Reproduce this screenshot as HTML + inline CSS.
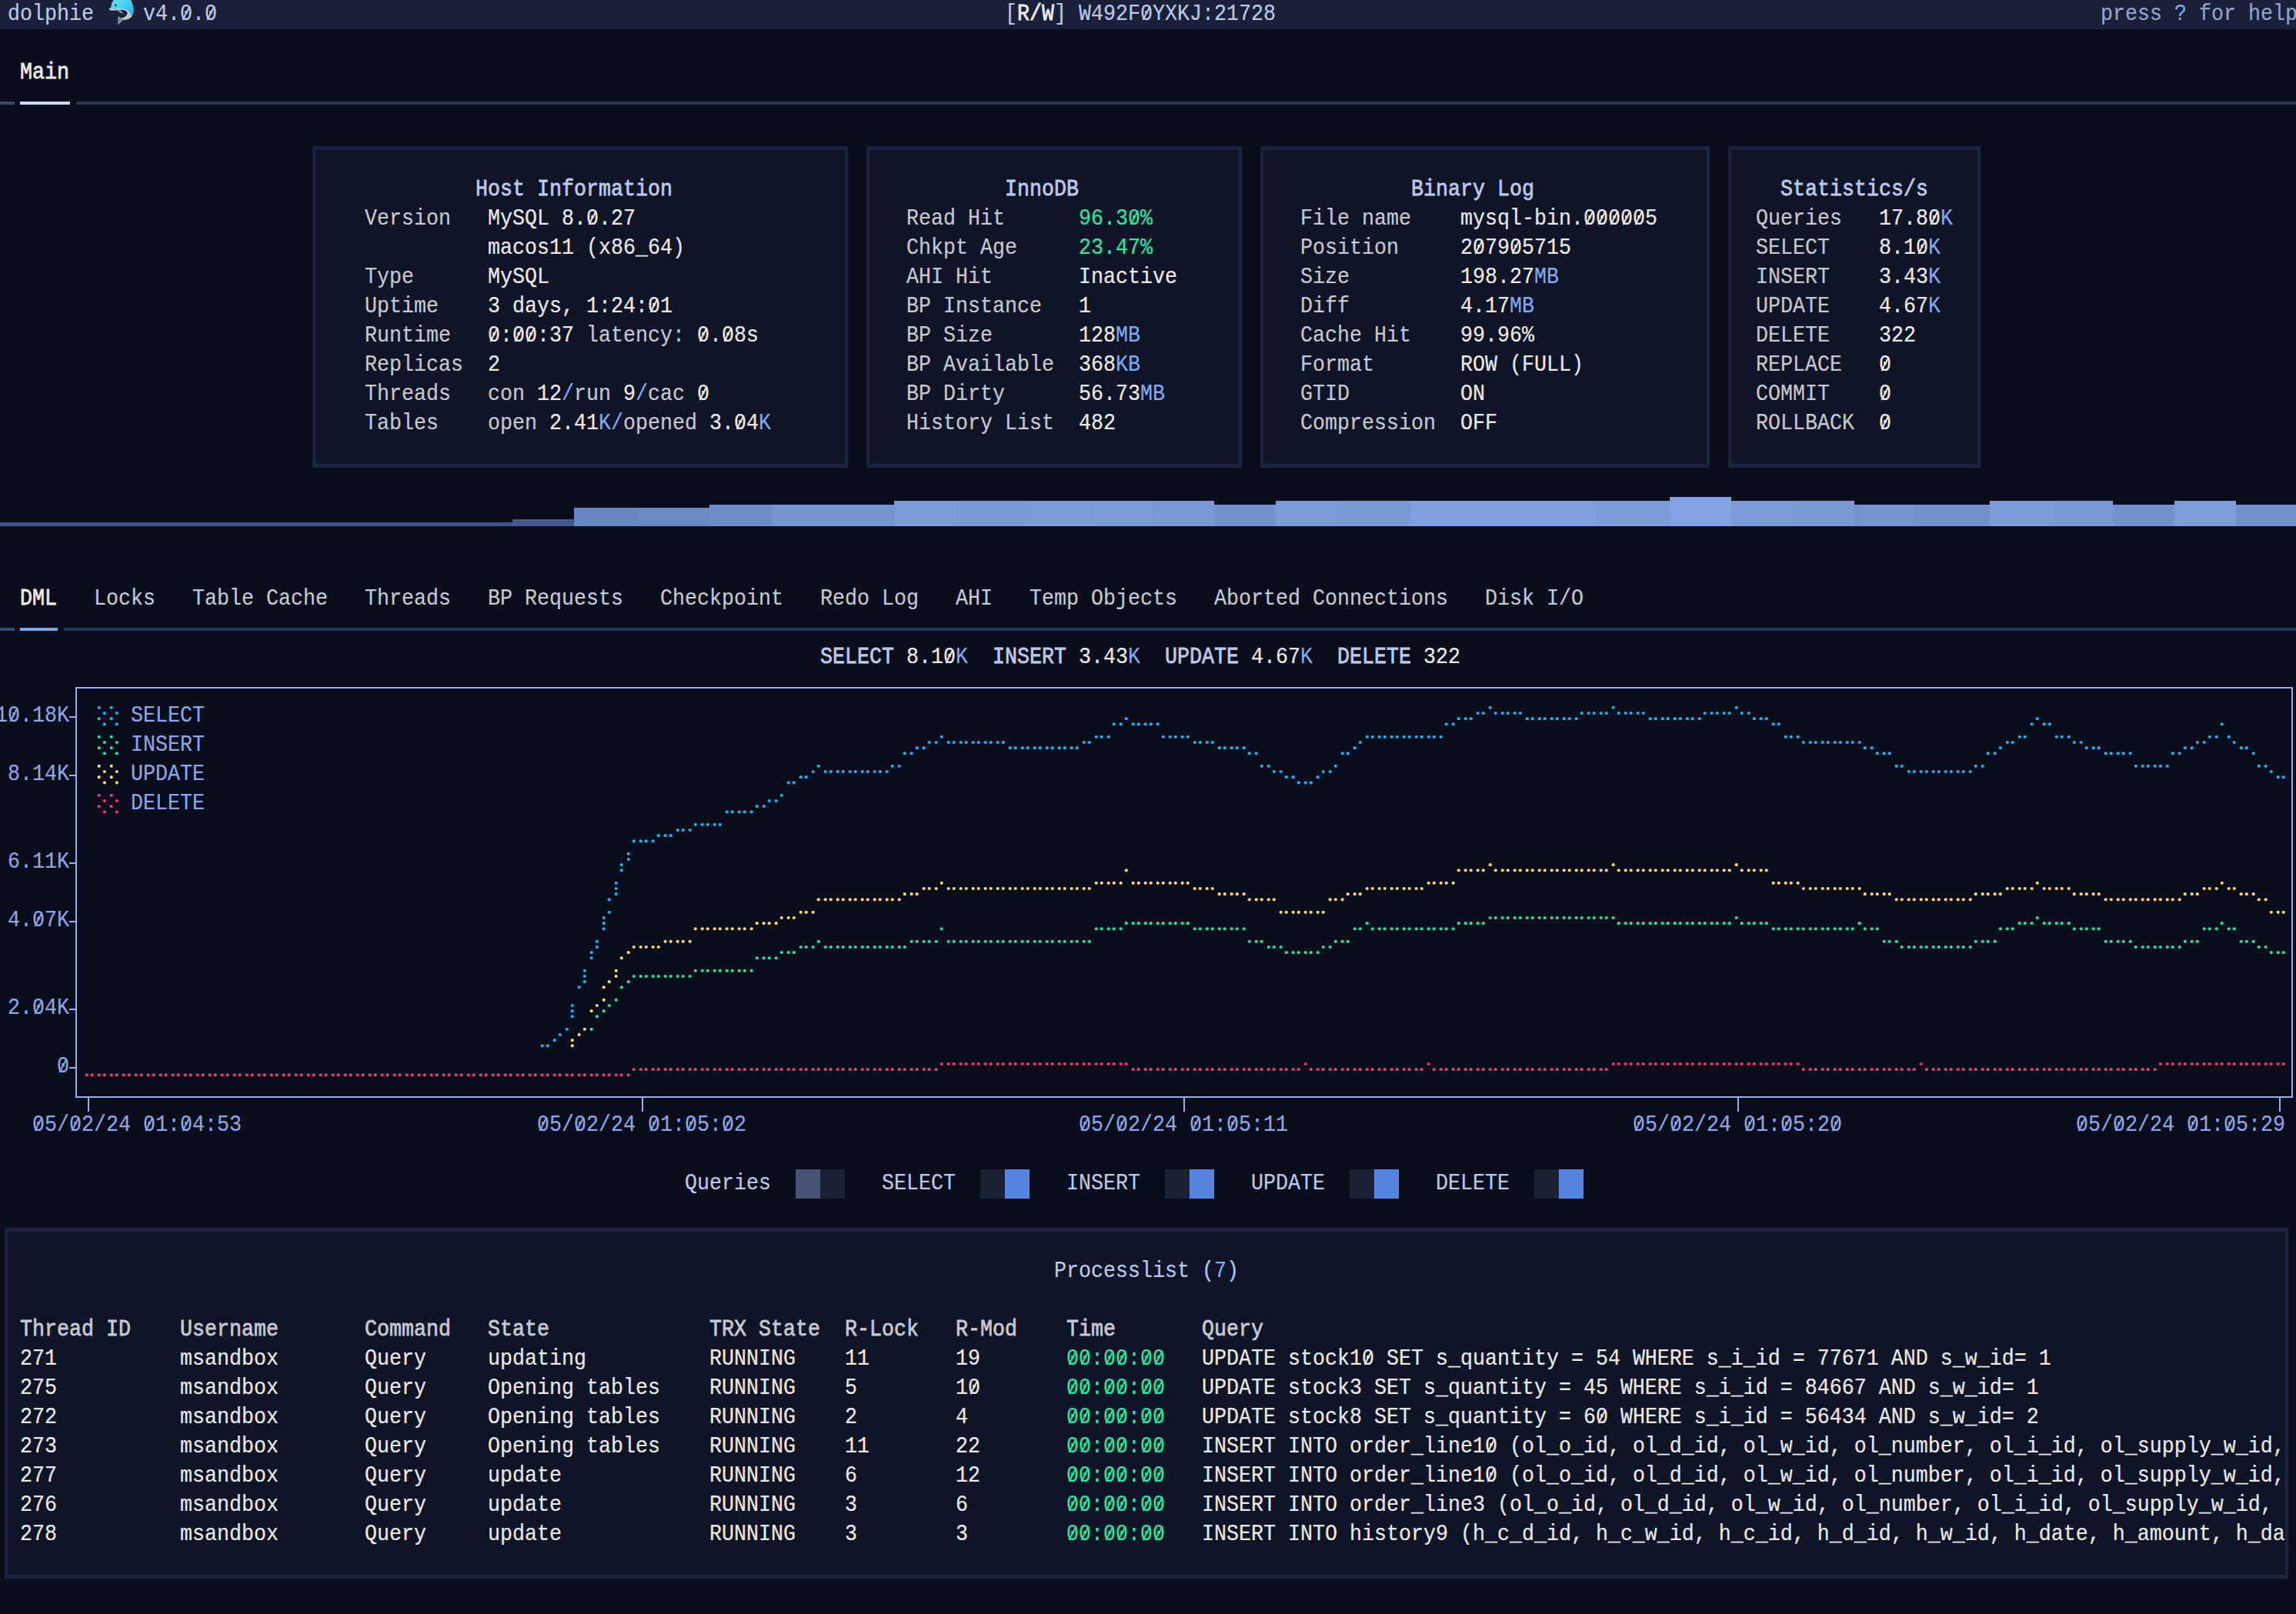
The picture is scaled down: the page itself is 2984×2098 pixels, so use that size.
<!DOCTYPE html>
<html><head><meta charset="utf-8"><title>dolphie</title>
<style>
html,body{margin:0;padding:0;width:2984px;height:2098px;overflow:hidden;background:#090d1c;}
.t{position:absolute;white-space:pre;font-family:"Liberation Mono",monospace;font-size:26.6667px;line-height:38px;height:38px;transform:scaleY(1.08);transform-origin:0 26px;}
.r{position:absolute;}
.z{position:relative;font-style:normal;}
.z::after{content:"";position:absolute;left:50%;top:50%;width:2px;height:19px;background:currentColor;transform:translate(-50%,-57%) rotate(29deg);}
svg{position:absolute;left:0;top:0;}
</style></head><body>
<div class="r" style="left:0.00px;top:0.00px;width:2984.00px;height:38.00px;background:#1a2039"></div>
<div class="t" style="left:10.00px;top:0px"><span style="color:#bbc8e8;-webkit-text-stroke:0.2px #bbc8e8">dolphie</span><span style="color:#bbc8e8;-webkit-text-stroke:0.2px #bbc8e8"> </span></div>
<div class="t" style="left:186.00px;top:0px"><span style="color:#bbc8e8;-webkit-text-stroke:0.2px #bbc8e8">v4.<i class="z">0</i>.<i class="z">0</i></span></div>
<div class="t" style="left:1306.00px;top:0px"><span style="color:#bbc8e8;-webkit-text-stroke:0.2px #bbc8e8">[</span><span style="color:#e9e9e9;-webkit-text-stroke:0.7px #e9e9e9">R/W</span><span style="color:#bbc8e8;-webkit-text-stroke:0.2px #bbc8e8">]</span><span style="color:#bbc8e8;-webkit-text-stroke:0.2px #bbc8e8"> W492F<i class="z">0</i>YXKJ:21728</span></div>
<div class="t" style="left:2730.00px;top:0px"><span style="color:#91a6cc;-webkit-text-stroke:0.2px #91a6cc">press </span><span style="color:#82a9f4;-webkit-text-stroke:0.2px #82a9f4">?</span><span style="color:#91a6cc;-webkit-text-stroke:0.2px #91a6cc"> for help</span></div>
<div class="t" style="left:26.00px;top:76px"><span style="color:#e9e9e9;-webkit-text-stroke:0.7px #e9e9e9">Main</span></div>
<div class="r" style="left:0.00px;top:132.00px;width:19.00px;height:4.00px;background:#34497a"></div>
<div class="r" style="left:26.00px;top:132.00px;width:65.00px;height:4.00px;background:#c6dcfa"></div>
<div class="r" style="left:99.00px;top:132.00px;width:2984.00px;height:4.00px;background:#283659"></div>
<div class="r" style="left:406.00px;top:190.00px;width:696.00px;height:418.00px;background:#1a2440"></div>
<div class="r" style="left:410.00px;top:195.00px;width:688.00px;height:408.00px;background:#0f1527"></div>
<div class="r" style="left:1126.00px;top:190.00px;width:488.00px;height:418.00px;background:#1a2440"></div>
<div class="r" style="left:1130.00px;top:195.00px;width:480.00px;height:408.00px;background:#0f1527"></div>
<div class="r" style="left:1638.00px;top:190.00px;width:584.00px;height:418.00px;background:#1a2440"></div>
<div class="r" style="left:1642.00px;top:195.00px;width:576.00px;height:408.00px;background:#0f1527"></div>
<div class="r" style="left:2246.00px;top:190.00px;width:328.00px;height:418.00px;background:#1a2440"></div>
<div class="r" style="left:2250.00px;top:195.00px;width:320.00px;height:408.00px;background:#0f1527"></div>
<div class="t" style="left:618.00px;top:228px"><span style="color:#bbc8e8;-webkit-text-stroke:0.7px #bbc8e8">Host Information</span></div>
<div class="t" style="left:474.00px;top:266px"><span style="color:#c5c7d2;-webkit-text-stroke:0.2px #c5c7d2">Version</span></div>
<div class="t" style="left:634.00px;top:266px"><span style="color:#e9e9e9;-webkit-text-stroke:0.2px #e9e9e9">MySQL 8.<i class="z">0</i>.27</span></div>
<div class="t" style="left:634.00px;top:304px"><span style="color:#e9e9e9;-webkit-text-stroke:0.2px #e9e9e9">macos11 (x86_64)</span></div>
<div class="t" style="left:474.00px;top:342px"><span style="color:#c5c7d2;-webkit-text-stroke:0.2px #c5c7d2">Type</span></div>
<div class="t" style="left:634.00px;top:342px"><span style="color:#e9e9e9;-webkit-text-stroke:0.2px #e9e9e9">MySQL</span></div>
<div class="t" style="left:474.00px;top:380px"><span style="color:#c5c7d2;-webkit-text-stroke:0.2px #c5c7d2">Uptime</span></div>
<div class="t" style="left:634.00px;top:380px"><span style="color:#e9e9e9;-webkit-text-stroke:0.2px #e9e9e9">3 days, 1:24:<i class="z">0</i>1</span></div>
<div class="t" style="left:474.00px;top:418px"><span style="color:#c5c7d2;-webkit-text-stroke:0.2px #c5c7d2">Runtime</span></div>
<div class="t" style="left:634.00px;top:418px"><span style="color:#e9e9e9;-webkit-text-stroke:0.2px #e9e9e9"><i class="z">0</i>:<i class="z">0</i><i class="z">0</i>:37 </span><span style="color:#c5c7d2;-webkit-text-stroke:0.2px #c5c7d2">latency:</span><span style="color:#e9e9e9;-webkit-text-stroke:0.2px #e9e9e9"> <i class="z">0</i>.<i class="z">0</i>8s</span></div>
<div class="t" style="left:474.00px;top:456px"><span style="color:#c5c7d2;-webkit-text-stroke:0.2px #c5c7d2">Replicas</span></div>
<div class="t" style="left:634.00px;top:456px"><span style="color:#e9e9e9;-webkit-text-stroke:0.2px #e9e9e9">2</span></div>
<div class="t" style="left:474.00px;top:494px"><span style="color:#c5c7d2;-webkit-text-stroke:0.2px #c5c7d2">Threads</span></div>
<div class="t" style="left:634.00px;top:494px"><span style="color:#c5c7d2;-webkit-text-stroke:0.2px #c5c7d2">con </span><span style="color:#e9e9e9;-webkit-text-stroke:0.2px #e9e9e9">12</span><span style="color:#82a9f4;-webkit-text-stroke:0.2px #82a9f4">/</span><span style="color:#c5c7d2;-webkit-text-stroke:0.2px #c5c7d2">run </span><span style="color:#e9e9e9;-webkit-text-stroke:0.2px #e9e9e9">9</span><span style="color:#82a9f4;-webkit-text-stroke:0.2px #82a9f4">/</span><span style="color:#c5c7d2;-webkit-text-stroke:0.2px #c5c7d2">cac </span><span style="color:#e9e9e9;-webkit-text-stroke:0.2px #e9e9e9"><i class="z">0</i></span></div>
<div class="t" style="left:474.00px;top:532px"><span style="color:#c5c7d2;-webkit-text-stroke:0.2px #c5c7d2">Tables</span></div>
<div class="t" style="left:634.00px;top:532px"><span style="color:#c5c7d2;-webkit-text-stroke:0.2px #c5c7d2">open </span><span style="color:#e9e9e9;-webkit-text-stroke:0.2px #e9e9e9">2.41</span><span style="color:#82a9f4;-webkit-text-stroke:0.2px #82a9f4">K</span><span style="color:#82a9f4;-webkit-text-stroke:0.2px #82a9f4">/</span><span style="color:#c5c7d2;-webkit-text-stroke:0.2px #c5c7d2">opened </span><span style="color:#e9e9e9;-webkit-text-stroke:0.2px #e9e9e9">3.<i class="z">0</i>4</span><span style="color:#82a9f4;-webkit-text-stroke:0.2px #82a9f4">K</span></div>
<div class="t" style="left:1306.00px;top:228px"><span style="color:#bbc8e8;-webkit-text-stroke:0.7px #bbc8e8">InnoDB</span></div>
<div class="t" style="left:1178.00px;top:266px"><span style="color:#c5c7d2;-webkit-text-stroke:0.2px #c5c7d2">Read Hit</span></div>
<div class="t" style="left:1402.00px;top:266px"><span style="color:#24e8a4;-webkit-text-stroke:0.2px #24e8a4">96.3<i class="z">0</i>%</span></div>
<div class="t" style="left:1178.00px;top:304px"><span style="color:#c5c7d2;-webkit-text-stroke:0.2px #c5c7d2">Chkpt Age</span></div>
<div class="t" style="left:1402.00px;top:304px"><span style="color:#24e8a4;-webkit-text-stroke:0.2px #24e8a4">23.47%</span></div>
<div class="t" style="left:1178.00px;top:342px"><span style="color:#c5c7d2;-webkit-text-stroke:0.2px #c5c7d2">AHI Hit</span></div>
<div class="t" style="left:1402.00px;top:342px"><span style="color:#e9e9e9;-webkit-text-stroke:0.2px #e9e9e9">Inactive</span></div>
<div class="t" style="left:1178.00px;top:380px"><span style="color:#c5c7d2;-webkit-text-stroke:0.2px #c5c7d2">BP Instance</span></div>
<div class="t" style="left:1402.00px;top:380px"><span style="color:#e9e9e9;-webkit-text-stroke:0.2px #e9e9e9">1</span></div>
<div class="t" style="left:1178.00px;top:418px"><span style="color:#c5c7d2;-webkit-text-stroke:0.2px #c5c7d2">BP Size</span></div>
<div class="t" style="left:1402.00px;top:418px"><span style="color:#e9e9e9;-webkit-text-stroke:0.2px #e9e9e9">128</span><span style="color:#82a9f4;-webkit-text-stroke:0.2px #82a9f4">MB</span></div>
<div class="t" style="left:1178.00px;top:456px"><span style="color:#c5c7d2;-webkit-text-stroke:0.2px #c5c7d2">BP Available</span></div>
<div class="t" style="left:1402.00px;top:456px"><span style="color:#e9e9e9;-webkit-text-stroke:0.2px #e9e9e9">368</span><span style="color:#82a9f4;-webkit-text-stroke:0.2px #82a9f4">KB</span></div>
<div class="t" style="left:1178.00px;top:494px"><span style="color:#c5c7d2;-webkit-text-stroke:0.2px #c5c7d2">BP Dirty</span></div>
<div class="t" style="left:1402.00px;top:494px"><span style="color:#e9e9e9;-webkit-text-stroke:0.2px #e9e9e9">56.73</span><span style="color:#82a9f4;-webkit-text-stroke:0.2px #82a9f4">MB</span></div>
<div class="t" style="left:1178.00px;top:532px"><span style="color:#c5c7d2;-webkit-text-stroke:0.2px #c5c7d2">History List</span></div>
<div class="t" style="left:1402.00px;top:532px"><span style="color:#e9e9e9;-webkit-text-stroke:0.2px #e9e9e9">482</span></div>
<div class="t" style="left:1834.00px;top:228px"><span style="color:#bbc8e8;-webkit-text-stroke:0.7px #bbc8e8">Binary Log</span></div>
<div class="t" style="left:1690.00px;top:266px"><span style="color:#c5c7d2;-webkit-text-stroke:0.2px #c5c7d2">File name</span></div>
<div class="t" style="left:1898.00px;top:266px"><span style="color:#e9e9e9;-webkit-text-stroke:0.2px #e9e9e9">mysql-bin.<i class="z">0</i><i class="z">0</i><i class="z">0</i><i class="z">0</i><i class="z">0</i>5</span></div>
<div class="t" style="left:1690.00px;top:304px"><span style="color:#c5c7d2;-webkit-text-stroke:0.2px #c5c7d2">Position</span></div>
<div class="t" style="left:1898.00px;top:304px"><span style="color:#e9e9e9;-webkit-text-stroke:0.2px #e9e9e9">2<i class="z">0</i>79<i class="z">0</i>5715</span></div>
<div class="t" style="left:1690.00px;top:342px"><span style="color:#c5c7d2;-webkit-text-stroke:0.2px #c5c7d2">Size</span></div>
<div class="t" style="left:1898.00px;top:342px"><span style="color:#e9e9e9;-webkit-text-stroke:0.2px #e9e9e9">198.27</span><span style="color:#82a9f4;-webkit-text-stroke:0.2px #82a9f4">MB</span></div>
<div class="t" style="left:1690.00px;top:380px"><span style="color:#c5c7d2;-webkit-text-stroke:0.2px #c5c7d2">Diff</span></div>
<div class="t" style="left:1898.00px;top:380px"><span style="color:#e9e9e9;-webkit-text-stroke:0.2px #e9e9e9">4.17</span><span style="color:#82a9f4;-webkit-text-stroke:0.2px #82a9f4">MB</span></div>
<div class="t" style="left:1690.00px;top:418px"><span style="color:#c5c7d2;-webkit-text-stroke:0.2px #c5c7d2">Cache Hit</span></div>
<div class="t" style="left:1898.00px;top:418px"><span style="color:#e9e9e9;-webkit-text-stroke:0.2px #e9e9e9">99.96%</span></div>
<div class="t" style="left:1690.00px;top:456px"><span style="color:#c5c7d2;-webkit-text-stroke:0.2px #c5c7d2">Format</span></div>
<div class="t" style="left:1898.00px;top:456px"><span style="color:#e9e9e9;-webkit-text-stroke:0.2px #e9e9e9">ROW (FULL)</span></div>
<div class="t" style="left:1690.00px;top:494px"><span style="color:#c5c7d2;-webkit-text-stroke:0.2px #c5c7d2">GTID</span></div>
<div class="t" style="left:1898.00px;top:494px"><span style="color:#e9e9e9;-webkit-text-stroke:0.2px #e9e9e9">ON</span></div>
<div class="t" style="left:1690.00px;top:532px"><span style="color:#c5c7d2;-webkit-text-stroke:0.2px #c5c7d2">Compression</span></div>
<div class="t" style="left:1898.00px;top:532px"><span style="color:#e9e9e9;-webkit-text-stroke:0.2px #e9e9e9">OFF</span></div>
<div class="t" style="left:2314.00px;top:228px"><span style="color:#bbc8e8;-webkit-text-stroke:0.7px #bbc8e8">Statistics/s</span></div>
<div class="t" style="left:2282.00px;top:266px"><span style="color:#c5c7d2;-webkit-text-stroke:0.2px #c5c7d2">Queries</span></div>
<div class="t" style="left:2442.00px;top:266px"><span style="color:#e9e9e9;-webkit-text-stroke:0.2px #e9e9e9">17.8<i class="z">0</i></span><span style="color:#82a9f4;-webkit-text-stroke:0.2px #82a9f4">K</span></div>
<div class="t" style="left:2282.00px;top:304px"><span style="color:#c5c7d2;-webkit-text-stroke:0.2px #c5c7d2">SELECT</span></div>
<div class="t" style="left:2442.00px;top:304px"><span style="color:#e9e9e9;-webkit-text-stroke:0.2px #e9e9e9">8.1<i class="z">0</i></span><span style="color:#82a9f4;-webkit-text-stroke:0.2px #82a9f4">K</span></div>
<div class="t" style="left:2282.00px;top:342px"><span style="color:#c5c7d2;-webkit-text-stroke:0.2px #c5c7d2">INSERT</span></div>
<div class="t" style="left:2442.00px;top:342px"><span style="color:#e9e9e9;-webkit-text-stroke:0.2px #e9e9e9">3.43</span><span style="color:#82a9f4;-webkit-text-stroke:0.2px #82a9f4">K</span></div>
<div class="t" style="left:2282.00px;top:380px"><span style="color:#c5c7d2;-webkit-text-stroke:0.2px #c5c7d2">UPDATE</span></div>
<div class="t" style="left:2442.00px;top:380px"><span style="color:#e9e9e9;-webkit-text-stroke:0.2px #e9e9e9">4.67</span><span style="color:#82a9f4;-webkit-text-stroke:0.2px #82a9f4">K</span></div>
<div class="t" style="left:2282.00px;top:418px"><span style="color:#c5c7d2;-webkit-text-stroke:0.2px #c5c7d2">DELETE</span></div>
<div class="t" style="left:2442.00px;top:418px"><span style="color:#e9e9e9;-webkit-text-stroke:0.2px #e9e9e9">322</span></div>
<div class="t" style="left:2282.00px;top:456px"><span style="color:#c5c7d2;-webkit-text-stroke:0.2px #c5c7d2">REPLACE</span></div>
<div class="t" style="left:2442.00px;top:456px"><span style="color:#e9e9e9;-webkit-text-stroke:0.2px #e9e9e9"><i class="z">0</i></span></div>
<div class="t" style="left:2282.00px;top:494px"><span style="color:#c5c7d2;-webkit-text-stroke:0.2px #c5c7d2">COMMIT</span></div>
<div class="t" style="left:2442.00px;top:494px"><span style="color:#e9e9e9;-webkit-text-stroke:0.2px #e9e9e9"><i class="z">0</i></span></div>
<div class="t" style="left:2282.00px;top:532px"><span style="color:#c5c7d2;-webkit-text-stroke:0.2px #c5c7d2">ROLLBACK</span></div>
<div class="t" style="left:2442.00px;top:532px"><span style="color:#e9e9e9;-webkit-text-stroke:0.2px #e9e9e9"><i class="z">0</i></span></div>
<div class="r" style="left:0.00px;top:679.25px;width:666.00px;height:4.75px;background:#3a5388"></div>
<div class="r" style="left:666.00px;top:674.50px;width:80.00px;height:9.50px;background:#42598d"></div>
<div class="r" style="left:746.00px;top:660.25px;width:80.00px;height:23.75px;background:#6886c1"></div>
<div class="r" style="left:826.00px;top:660.25px;width:96.00px;height:23.75px;background:#6b8ac4"></div>
<div class="r" style="left:922.00px;top:655.50px;width:80.00px;height:28.50px;background:#6d8cc7"></div>
<div class="r" style="left:1002.00px;top:655.50px;width:80.00px;height:28.50px;background:#7494d0"></div>
<div class="r" style="left:1082.00px;top:655.50px;width:80.00px;height:28.50px;background:#7494d0"></div>
<div class="r" style="left:1162.00px;top:650.75px;width:80.00px;height:33.25px;background:#7b9bd9"></div>
<div class="r" style="left:1242.00px;top:650.75px;width:96.00px;height:33.25px;background:#7a9ad7"></div>
<div class="r" style="left:1338.00px;top:650.75px;width:80.00px;height:33.25px;background:#7c9cda"></div>
<div class="r" style="left:1418.00px;top:650.75px;width:80.00px;height:33.25px;background:#7b9bd8"></div>
<div class="r" style="left:1498.00px;top:650.75px;width:80.00px;height:33.25px;background:#7899d6"></div>
<div class="r" style="left:1578.00px;top:655.50px;width:80.00px;height:28.50px;background:#7391cc"></div>
<div class="r" style="left:1658.00px;top:650.75px;width:80.00px;height:33.25px;background:#7b9bd8"></div>
<div class="r" style="left:1738.00px;top:650.75px;width:96.00px;height:33.25px;background:#7a9ad6"></div>
<div class="r" style="left:1834.00px;top:650.75px;width:80.00px;height:33.25px;background:#80a0df"></div>
<div class="r" style="left:1914.00px;top:650.75px;width:80.00px;height:33.25px;background:#80a0df"></div>
<div class="r" style="left:1994.00px;top:650.75px;width:80.00px;height:33.25px;background:#7fa0de"></div>
<div class="r" style="left:2074.00px;top:650.75px;width:96.00px;height:33.25px;background:#7c9cd9"></div>
<div class="r" style="left:2170.00px;top:646.00px;width:80.00px;height:38.00px;background:#82a3e3"></div>
<div class="r" style="left:2250.00px;top:650.75px;width:80.00px;height:33.25px;background:#7b9bd8"></div>
<div class="r" style="left:2330.00px;top:650.75px;width:80.00px;height:33.25px;background:#7a9ad6"></div>
<div class="r" style="left:2410.00px;top:655.50px;width:80.00px;height:28.50px;background:#7493cf"></div>
<div class="r" style="left:2490.00px;top:655.50px;width:96.00px;height:28.50px;background:#7391cc"></div>
<div class="r" style="left:2586.00px;top:650.75px;width:80.00px;height:33.25px;background:#7c9cda"></div>
<div class="r" style="left:2666.00px;top:650.75px;width:80.00px;height:33.25px;background:#7a9ad7"></div>
<div class="r" style="left:2746.00px;top:655.50px;width:80.00px;height:28.50px;background:#7391cc"></div>
<div class="r" style="left:2826.00px;top:650.75px;width:80.00px;height:33.25px;background:#7d9ddb"></div>
<div class="r" style="left:2906.00px;top:655.50px;width:78.00px;height:28.50px;background:#7391cc"></div>
<div class="t" style="left:26.00px;top:760px"><span style="color:#e9e9e9;-webkit-text-stroke:0.7px #e9e9e9">DML</span></div>
<div class="t" style="left:122.00px;top:760px"><span style="color:#c5c7d2;-webkit-text-stroke:0.2px #c5c7d2">Locks</span></div>
<div class="t" style="left:250.00px;top:760px"><span style="color:#c5c7d2;-webkit-text-stroke:0.2px #c5c7d2">Table Cache</span></div>
<div class="t" style="left:474.00px;top:760px"><span style="color:#c5c7d2;-webkit-text-stroke:0.2px #c5c7d2">Threads</span></div>
<div class="t" style="left:634.00px;top:760px"><span style="color:#c5c7d2;-webkit-text-stroke:0.2px #c5c7d2">BP Requests</span></div>
<div class="t" style="left:858.00px;top:760px"><span style="color:#c5c7d2;-webkit-text-stroke:0.2px #c5c7d2">Checkpoint</span></div>
<div class="t" style="left:1066.00px;top:760px"><span style="color:#c5c7d2;-webkit-text-stroke:0.2px #c5c7d2">Redo Log</span></div>
<div class="t" style="left:1242.00px;top:760px"><span style="color:#c5c7d2;-webkit-text-stroke:0.2px #c5c7d2">AHI</span></div>
<div class="t" style="left:1338.00px;top:760px"><span style="color:#c5c7d2;-webkit-text-stroke:0.2px #c5c7d2">Temp Objects</span></div>
<div class="t" style="left:1578.00px;top:760px"><span style="color:#c5c7d2;-webkit-text-stroke:0.2px #c5c7d2">Aborted Connections</span></div>
<div class="t" style="left:1930.00px;top:760px"><span style="color:#c5c7d2;-webkit-text-stroke:0.2px #c5c7d2">Disk I/O</span></div>
<div class="r" style="left:0.00px;top:816.00px;width:19.00px;height:4.00px;background:#34497a"></div>
<div class="r" style="left:26.00px;top:816.00px;width:49.00px;height:4.00px;background:#7aa6e8"></div>
<div class="r" style="left:83.00px;top:816.00px;width:2984.00px;height:4.00px;background:#283659"></div>
<div class="t" style="left:1066.00px;top:836px"><span style="color:#bbc8e8;-webkit-text-stroke:0.7px #bbc8e8">SELECT</span><span style="color:#e9e9e9;-webkit-text-stroke:0.2px #e9e9e9"> 8.1<i class="z">0</i></span><span style="color:#82a9f4;-webkit-text-stroke:0.2px #82a9f4">K</span><span style="color:#e9e9e9;-webkit-text-stroke:0.2px #e9e9e9">  </span><span style="color:#bbc8e8;-webkit-text-stroke:0.7px #bbc8e8">INSERT</span><span style="color:#e9e9e9;-webkit-text-stroke:0.2px #e9e9e9"> 3.43</span><span style="color:#82a9f4;-webkit-text-stroke:0.2px #82a9f4">K</span><span style="color:#e9e9e9;-webkit-text-stroke:0.2px #e9e9e9">  </span><span style="color:#bbc8e8;-webkit-text-stroke:0.7px #bbc8e8">UPDATE</span><span style="color:#e9e9e9;-webkit-text-stroke:0.2px #e9e9e9"> 4.67</span><span style="color:#82a9f4;-webkit-text-stroke:0.2px #82a9f4">K</span><span style="color:#e9e9e9;-webkit-text-stroke:0.2px #e9e9e9">  </span><span style="color:#bbc8e8;-webkit-text-stroke:0.7px #bbc8e8">DELETE</span><span style="color:#e9e9e9;-webkit-text-stroke:0.2px #e9e9e9"> 322</span></div>
<div class="r" style="left:98.00px;top:893.00px;width:2882.00px;height:2.00px;background:#90aef0"></div>
<div class="r" style="left:98.00px;top:1425.00px;width:2882.00px;height:2.00px;background:#90aef0"></div>
<div class="r" style="left:98.00px;top:893.00px;width:2.00px;height:534.00px;background:#90aef0"></div>
<div class="r" style="left:2978.00px;top:893.00px;width:2.00px;height:534.00px;background:#90aef0"></div>
<div class="t" style="left:-6.00px;top:912px"><span style="color:#8aa6e8;-webkit-text-stroke:0.2px #8aa6e8">1<i class="z">0</i>.18K</span></div>
<div class="r" style="left:90.00px;top:931.00px;width:9.00px;height:2.00px;background:#90aef0"></div>
<div class="t" style="left:10.00px;top:988px"><span style="color:#8aa6e8;-webkit-text-stroke:0.2px #8aa6e8">8.14K</span></div>
<div class="r" style="left:90.00px;top:1007.00px;width:9.00px;height:2.00px;background:#90aef0"></div>
<div class="t" style="left:10.00px;top:1102px"><span style="color:#8aa6e8;-webkit-text-stroke:0.2px #8aa6e8">6.11K</span></div>
<div class="r" style="left:90.00px;top:1121.00px;width:9.00px;height:2.00px;background:#90aef0"></div>
<div class="t" style="left:10.00px;top:1178px"><span style="color:#8aa6e8;-webkit-text-stroke:0.2px #8aa6e8">4.<i class="z">0</i>7K</span></div>
<div class="r" style="left:90.00px;top:1197.00px;width:9.00px;height:2.00px;background:#90aef0"></div>
<div class="t" style="left:10.00px;top:1292px"><span style="color:#8aa6e8;-webkit-text-stroke:0.2px #8aa6e8">2.<i class="z">0</i>4K</span></div>
<div class="r" style="left:90.00px;top:1311.00px;width:9.00px;height:2.00px;background:#90aef0"></div>
<div class="t" style="left:74.00px;top:1368px"><span style="color:#8aa6e8;-webkit-text-stroke:0.2px #8aa6e8"><i class="z">0</i></span></div>
<div class="r" style="left:90.00px;top:1387.00px;width:9.00px;height:2.00px;background:#90aef0"></div>
<div class="t" style="left:42.00px;top:1444px"><span style="color:#8aa6e8;-webkit-text-stroke:0.2px #8aa6e8"><i class="z">0</i>5/<i class="z">0</i>2/24 <i class="z">0</i>1:<i class="z">0</i>4:53</span></div>
<div class="t" style="left:698.00px;top:1444px"><span style="color:#8aa6e8;-webkit-text-stroke:0.2px #8aa6e8"><i class="z">0</i>5/<i class="z">0</i>2/24 <i class="z">0</i>1:<i class="z">0</i>5:<i class="z">0</i>2</span></div>
<div class="t" style="left:1402.00px;top:1444px"><span style="color:#8aa6e8;-webkit-text-stroke:0.2px #8aa6e8"><i class="z">0</i>5/<i class="z">0</i>2/24 <i class="z">0</i>1:<i class="z">0</i>5:11</span></div>
<div class="t" style="left:2122.00px;top:1444px"><span style="color:#8aa6e8;-webkit-text-stroke:0.2px #8aa6e8"><i class="z">0</i>5/<i class="z">0</i>2/24 <i class="z">0</i>1:<i class="z">0</i>5:2<i class="z">0</i></span></div>
<div class="t" style="left:2698.00px;top:1444px"><span style="color:#8aa6e8;-webkit-text-stroke:0.2px #8aa6e8"><i class="z">0</i>5/<i class="z">0</i>2/24 <i class="z">0</i>1:<i class="z">0</i>5:29</span></div>
<div class="r" style="left:114.00px;top:1426.00px;width:2.00px;height:19.00px;background:#90aef0"></div>
<div class="r" style="left:834.00px;top:1426.00px;width:2.00px;height:19.00px;background:#90aef0"></div>
<div class="r" style="left:1538.00px;top:1426.00px;width:2.00px;height:19.00px;background:#90aef0"></div>
<div class="r" style="left:2258.00px;top:1426.00px;width:2.00px;height:19.00px;background:#90aef0"></div>
<div class="r" style="left:2962.00px;top:1426.00px;width:2.00px;height:19.00px;background:#90aef0"></div>
<div class="t" style="left:170.00px;top:912px"><span style="color:#8aa6e8;-webkit-text-stroke:0.2px #8aa6e8">SELECT</span></div>
<div class="t" style="left:170.00px;top:950px"><span style="color:#8aa6e8;-webkit-text-stroke:0.2px #8aa6e8">INSERT</span></div>
<div class="t" style="left:170.00px;top:988px"><span style="color:#8aa6e8;-webkit-text-stroke:0.2px #8aa6e8">UPDATE</span></div>
<div class="t" style="left:170.00px;top:1026px"><span style="color:#8aa6e8;-webkit-text-stroke:0.2px #8aa6e8">DELETE</span></div>
<div class="t" style="left:890.00px;top:1520px"><span style="color:#bbc8e8;-webkit-text-stroke:0.2px #bbc8e8">Queries</span></div>
<div class="r" style="left:1034.00px;top:1520.00px;width:64.00px;height:38.00px;background:#1b2236"></div>
<div class="r" style="left:1034.00px;top:1520.00px;width:32.00px;height:38.00px;background:#485477"></div>
<div class="t" style="left:1146.00px;top:1520px"><span style="color:#bbc8e8;-webkit-text-stroke:0.2px #bbc8e8">SELECT</span></div>
<div class="r" style="left:1274.00px;top:1520.00px;width:64.00px;height:38.00px;background:#1b2236"></div>
<div class="r" style="left:1306.00px;top:1520.00px;width:32.00px;height:38.00px;background:#5586df"></div>
<div class="t" style="left:1386.00px;top:1520px"><span style="color:#bbc8e8;-webkit-text-stroke:0.2px #bbc8e8">INSERT</span></div>
<div class="r" style="left:1514.00px;top:1520.00px;width:64.00px;height:38.00px;background:#1b2236"></div>
<div class="r" style="left:1546.00px;top:1520.00px;width:32.00px;height:38.00px;background:#5586df"></div>
<div class="t" style="left:1626.00px;top:1520px"><span style="color:#bbc8e8;-webkit-text-stroke:0.2px #bbc8e8">UPDATE</span></div>
<div class="r" style="left:1754.00px;top:1520.00px;width:64.00px;height:38.00px;background:#1b2236"></div>
<div class="r" style="left:1786.00px;top:1520.00px;width:32.00px;height:38.00px;background:#5586df"></div>
<div class="t" style="left:1866.00px;top:1520px"><span style="color:#bbc8e8;-webkit-text-stroke:0.2px #bbc8e8">DELETE</span></div>
<div class="r" style="left:1994.00px;top:1520.00px;width:64.00px;height:38.00px;background:#1b2236"></div>
<div class="r" style="left:2026.00px;top:1520.00px;width:32.00px;height:38.00px;background:#5586df"></div>
<div class="r" style="left:6.00px;top:1596.00px;width:2968.00px;height:456.00px;background:#1a2440"></div>
<div class="r" style="left:10.00px;top:1601.00px;width:2960.00px;height:446.00px;background:#0f1527"></div>
<div class="t" style="left:1370.00px;top:1634px"><span style="color:#bbc8e8;-webkit-text-stroke:0.2px #bbc8e8">Processlist (</span><span style="color:#82a9f4;-webkit-text-stroke:0.2px #82a9f4">7</span><span style="color:#bbc8e8;-webkit-text-stroke:0.2px #bbc8e8">)</span></div>
<div class="t" style="left:26.00px;top:1710px"><span style="color:#c5c7d2;-webkit-text-stroke:0.7px #c5c7d2">Thread ID</span></div>
<div class="t" style="left:234.00px;top:1710px"><span style="color:#c5c7d2;-webkit-text-stroke:0.7px #c5c7d2">Username</span></div>
<div class="t" style="left:474.00px;top:1710px"><span style="color:#c5c7d2;-webkit-text-stroke:0.7px #c5c7d2">Command</span></div>
<div class="t" style="left:634.00px;top:1710px"><span style="color:#c5c7d2;-webkit-text-stroke:0.7px #c5c7d2">State</span></div>
<div class="t" style="left:922.00px;top:1710px"><span style="color:#c5c7d2;-webkit-text-stroke:0.7px #c5c7d2">TRX State</span></div>
<div class="t" style="left:1098.00px;top:1710px"><span style="color:#c5c7d2;-webkit-text-stroke:0.7px #c5c7d2">R-Lock</span></div>
<div class="t" style="left:1242.00px;top:1710px"><span style="color:#c5c7d2;-webkit-text-stroke:0.7px #c5c7d2">R-Mod</span></div>
<div class="t" style="left:1386.00px;top:1710px"><span style="color:#c5c7d2;-webkit-text-stroke:0.7px #c5c7d2">Time</span></div>
<div class="t" style="left:1562.00px;top:1710px"><span style="color:#c5c7d2;-webkit-text-stroke:0.7px #c5c7d2">Query</span></div>
<div class="t" style="left:26.00px;top:1748px"><span style="color:#e9e9e9;-webkit-text-stroke:0.2px #e9e9e9">271</span></div>
<div class="t" style="left:234.00px;top:1748px"><span style="color:#e9e9e9;-webkit-text-stroke:0.2px #e9e9e9">msandbox</span></div>
<div class="t" style="left:474.00px;top:1748px"><span style="color:#e9e9e9;-webkit-text-stroke:0.2px #e9e9e9">Query</span></div>
<div class="t" style="left:634.00px;top:1748px"><span style="color:#e9e9e9;-webkit-text-stroke:0.2px #e9e9e9">updating</span></div>
<div class="t" style="left:922.00px;top:1748px"><span style="color:#e9e9e9;-webkit-text-stroke:0.2px #e9e9e9">RUNNING</span></div>
<div class="t" style="left:1098.00px;top:1748px"><span style="color:#e9e9e9;-webkit-text-stroke:0.2px #e9e9e9">11</span></div>
<div class="t" style="left:1242.00px;top:1748px"><span style="color:#e9e9e9;-webkit-text-stroke:0.2px #e9e9e9">19</span></div>
<div class="t" style="left:1386.00px;top:1748px"><span style="color:#24e8a4;-webkit-text-stroke:0.2px #24e8a4"><i class="z">0</i><i class="z">0</i>:<i class="z">0</i><i class="z">0</i>:<i class="z">0</i><i class="z">0</i></span></div>
<div class="t" style="left:1562.00px;top:1748px"><span style="color:#e9e9e9;-webkit-text-stroke:0.2px #e9e9e9">UPDATE stock1<i class="z">0</i> SET s_quantity = 54 WHERE s_i_id = 77671 AND s_w_id= 1</span></div>
<div class="t" style="left:26.00px;top:1786px"><span style="color:#e9e9e9;-webkit-text-stroke:0.2px #e9e9e9">275</span></div>
<div class="t" style="left:234.00px;top:1786px"><span style="color:#e9e9e9;-webkit-text-stroke:0.2px #e9e9e9">msandbox</span></div>
<div class="t" style="left:474.00px;top:1786px"><span style="color:#e9e9e9;-webkit-text-stroke:0.2px #e9e9e9">Query</span></div>
<div class="t" style="left:634.00px;top:1786px"><span style="color:#e9e9e9;-webkit-text-stroke:0.2px #e9e9e9">Opening tables</span></div>
<div class="t" style="left:922.00px;top:1786px"><span style="color:#e9e9e9;-webkit-text-stroke:0.2px #e9e9e9">RUNNING</span></div>
<div class="t" style="left:1098.00px;top:1786px"><span style="color:#e9e9e9;-webkit-text-stroke:0.2px #e9e9e9">5</span></div>
<div class="t" style="left:1242.00px;top:1786px"><span style="color:#e9e9e9;-webkit-text-stroke:0.2px #e9e9e9">1<i class="z">0</i></span></div>
<div class="t" style="left:1386.00px;top:1786px"><span style="color:#24e8a4;-webkit-text-stroke:0.2px #24e8a4"><i class="z">0</i><i class="z">0</i>:<i class="z">0</i><i class="z">0</i>:<i class="z">0</i><i class="z">0</i></span></div>
<div class="t" style="left:1562.00px;top:1786px"><span style="color:#e9e9e9;-webkit-text-stroke:0.2px #e9e9e9">UPDATE stock3 SET s_quantity = 45 WHERE s_i_id = 84667 AND s_w_id= 1</span></div>
<div class="t" style="left:26.00px;top:1824px"><span style="color:#e9e9e9;-webkit-text-stroke:0.2px #e9e9e9">272</span></div>
<div class="t" style="left:234.00px;top:1824px"><span style="color:#e9e9e9;-webkit-text-stroke:0.2px #e9e9e9">msandbox</span></div>
<div class="t" style="left:474.00px;top:1824px"><span style="color:#e9e9e9;-webkit-text-stroke:0.2px #e9e9e9">Query</span></div>
<div class="t" style="left:634.00px;top:1824px"><span style="color:#e9e9e9;-webkit-text-stroke:0.2px #e9e9e9">Opening tables</span></div>
<div class="t" style="left:922.00px;top:1824px"><span style="color:#e9e9e9;-webkit-text-stroke:0.2px #e9e9e9">RUNNING</span></div>
<div class="t" style="left:1098.00px;top:1824px"><span style="color:#e9e9e9;-webkit-text-stroke:0.2px #e9e9e9">2</span></div>
<div class="t" style="left:1242.00px;top:1824px"><span style="color:#e9e9e9;-webkit-text-stroke:0.2px #e9e9e9">4</span></div>
<div class="t" style="left:1386.00px;top:1824px"><span style="color:#24e8a4;-webkit-text-stroke:0.2px #24e8a4"><i class="z">0</i><i class="z">0</i>:<i class="z">0</i><i class="z">0</i>:<i class="z">0</i><i class="z">0</i></span></div>
<div class="t" style="left:1562.00px;top:1824px"><span style="color:#e9e9e9;-webkit-text-stroke:0.2px #e9e9e9">UPDATE stock8 SET s_quantity = 6<i class="z">0</i> WHERE s_i_id = 56434 AND s_w_id= 2</span></div>
<div class="t" style="left:26.00px;top:1862px"><span style="color:#e9e9e9;-webkit-text-stroke:0.2px #e9e9e9">273</span></div>
<div class="t" style="left:234.00px;top:1862px"><span style="color:#e9e9e9;-webkit-text-stroke:0.2px #e9e9e9">msandbox</span></div>
<div class="t" style="left:474.00px;top:1862px"><span style="color:#e9e9e9;-webkit-text-stroke:0.2px #e9e9e9">Query</span></div>
<div class="t" style="left:634.00px;top:1862px"><span style="color:#e9e9e9;-webkit-text-stroke:0.2px #e9e9e9">Opening tables</span></div>
<div class="t" style="left:922.00px;top:1862px"><span style="color:#e9e9e9;-webkit-text-stroke:0.2px #e9e9e9">RUNNING</span></div>
<div class="t" style="left:1098.00px;top:1862px"><span style="color:#e9e9e9;-webkit-text-stroke:0.2px #e9e9e9">11</span></div>
<div class="t" style="left:1242.00px;top:1862px"><span style="color:#e9e9e9;-webkit-text-stroke:0.2px #e9e9e9">22</span></div>
<div class="t" style="left:1386.00px;top:1862px"><span style="color:#24e8a4;-webkit-text-stroke:0.2px #24e8a4"><i class="z">0</i><i class="z">0</i>:<i class="z">0</i><i class="z">0</i>:<i class="z">0</i><i class="z">0</i></span></div>
<div class="t" style="left:1562.00px;top:1862px"><span style="color:#e9e9e9;-webkit-text-stroke:0.2px #e9e9e9">INSERT INTO order_line1<i class="z">0</i> (ol_o_id, ol_d_id, ol_w_id, ol_number, ol_i_id, ol_supply_w_id,</span></div>
<div class="t" style="left:26.00px;top:1900px"><span style="color:#e9e9e9;-webkit-text-stroke:0.2px #e9e9e9">277</span></div>
<div class="t" style="left:234.00px;top:1900px"><span style="color:#e9e9e9;-webkit-text-stroke:0.2px #e9e9e9">msandbox</span></div>
<div class="t" style="left:474.00px;top:1900px"><span style="color:#e9e9e9;-webkit-text-stroke:0.2px #e9e9e9">Query</span></div>
<div class="t" style="left:634.00px;top:1900px"><span style="color:#e9e9e9;-webkit-text-stroke:0.2px #e9e9e9">update</span></div>
<div class="t" style="left:922.00px;top:1900px"><span style="color:#e9e9e9;-webkit-text-stroke:0.2px #e9e9e9">RUNNING</span></div>
<div class="t" style="left:1098.00px;top:1900px"><span style="color:#e9e9e9;-webkit-text-stroke:0.2px #e9e9e9">6</span></div>
<div class="t" style="left:1242.00px;top:1900px"><span style="color:#e9e9e9;-webkit-text-stroke:0.2px #e9e9e9">12</span></div>
<div class="t" style="left:1386.00px;top:1900px"><span style="color:#24e8a4;-webkit-text-stroke:0.2px #24e8a4"><i class="z">0</i><i class="z">0</i>:<i class="z">0</i><i class="z">0</i>:<i class="z">0</i><i class="z">0</i></span></div>
<div class="t" style="left:1562.00px;top:1900px"><span style="color:#e9e9e9;-webkit-text-stroke:0.2px #e9e9e9">INSERT INTO order_line1<i class="z">0</i> (ol_o_id, ol_d_id, ol_w_id, ol_number, ol_i_id, ol_supply_w_id,</span></div>
<div class="t" style="left:26.00px;top:1938px"><span style="color:#e9e9e9;-webkit-text-stroke:0.2px #e9e9e9">276</span></div>
<div class="t" style="left:234.00px;top:1938px"><span style="color:#e9e9e9;-webkit-text-stroke:0.2px #e9e9e9">msandbox</span></div>
<div class="t" style="left:474.00px;top:1938px"><span style="color:#e9e9e9;-webkit-text-stroke:0.2px #e9e9e9">Query</span></div>
<div class="t" style="left:634.00px;top:1938px"><span style="color:#e9e9e9;-webkit-text-stroke:0.2px #e9e9e9">update</span></div>
<div class="t" style="left:922.00px;top:1938px"><span style="color:#e9e9e9;-webkit-text-stroke:0.2px #e9e9e9">RUNNING</span></div>
<div class="t" style="left:1098.00px;top:1938px"><span style="color:#e9e9e9;-webkit-text-stroke:0.2px #e9e9e9">3</span></div>
<div class="t" style="left:1242.00px;top:1938px"><span style="color:#e9e9e9;-webkit-text-stroke:0.2px #e9e9e9">6</span></div>
<div class="t" style="left:1386.00px;top:1938px"><span style="color:#24e8a4;-webkit-text-stroke:0.2px #24e8a4"><i class="z">0</i><i class="z">0</i>:<i class="z">0</i><i class="z">0</i>:<i class="z">0</i><i class="z">0</i></span></div>
<div class="t" style="left:1562.00px;top:1938px"><span style="color:#e9e9e9;-webkit-text-stroke:0.2px #e9e9e9">INSERT INTO order_line3 (ol_o_id, ol_d_id, ol_w_id, ol_number, ol_i_id, ol_supply_w_id,</span></div>
<div class="t" style="left:26.00px;top:1976px"><span style="color:#e9e9e9;-webkit-text-stroke:0.2px #e9e9e9">278</span></div>
<div class="t" style="left:234.00px;top:1976px"><span style="color:#e9e9e9;-webkit-text-stroke:0.2px #e9e9e9">msandbox</span></div>
<div class="t" style="left:474.00px;top:1976px"><span style="color:#e9e9e9;-webkit-text-stroke:0.2px #e9e9e9">Query</span></div>
<div class="t" style="left:634.00px;top:1976px"><span style="color:#e9e9e9;-webkit-text-stroke:0.2px #e9e9e9">update</span></div>
<div class="t" style="left:922.00px;top:1976px"><span style="color:#e9e9e9;-webkit-text-stroke:0.2px #e9e9e9">RUNNING</span></div>
<div class="t" style="left:1098.00px;top:1976px"><span style="color:#e9e9e9;-webkit-text-stroke:0.2px #e9e9e9">3</span></div>
<div class="t" style="left:1242.00px;top:1976px"><span style="color:#e9e9e9;-webkit-text-stroke:0.2px #e9e9e9">3</span></div>
<div class="t" style="left:1386.00px;top:1976px"><span style="color:#24e8a4;-webkit-text-stroke:0.2px #24e8a4"><i class="z">0</i><i class="z">0</i>:<i class="z">0</i><i class="z">0</i>:<i class="z">0</i><i class="z">0</i></span></div>
<div class="t" style="left:1562.00px;top:1976px"><span style="color:#e9e9e9;-webkit-text-stroke:0.2px #e9e9e9">INSERT INTO history9 (h_c_d_id, h_c_w_id, h_c_id, h_d_id, h_w_id, h_date, h_amount, h_da</span></div>
<svg width="2984" height="2098">
<g fill="#0fb4f5">
<circle cx="704.7" cy="1359.3" r="2.1"/>
<circle cx="711.8" cy="1359.3" r="2.1"/>
<circle cx="720.7" cy="1352.2" r="2.1"/>
<circle cx="727.8" cy="1345.0" r="2.1"/>
<circle cx="736.7" cy="1337.8" r="2.1"/>
<circle cx="743.8" cy="1307.0" r="2.1"/>
<circle cx="743.8" cy="1314.2" r="2.1"/>
<circle cx="743.8" cy="1321.3" r="2.1"/>
<circle cx="752.7" cy="1283.3" r="2.1"/>
<circle cx="759.8" cy="1261.8" r="2.1"/>
<circle cx="759.8" cy="1269.0" r="2.1"/>
<circle cx="759.8" cy="1276.2" r="2.1"/>
<circle cx="768.7" cy="1238.2" r="2.1"/>
<circle cx="768.7" cy="1245.3" r="2.1"/>
<circle cx="775.8" cy="1223.8" r="2.1"/>
<circle cx="775.8" cy="1231.0" r="2.1"/>
<circle cx="784.7" cy="1193.0" r="2.1"/>
<circle cx="784.7" cy="1200.2" r="2.1"/>
<circle cx="784.7" cy="1207.3" r="2.1"/>
<circle cx="791.8" cy="1169.3" r="2.1"/>
<circle cx="791.8" cy="1185.8" r="2.1"/>
<circle cx="800.7" cy="1147.8" r="2.1"/>
<circle cx="800.7" cy="1155.0" r="2.1"/>
<circle cx="800.7" cy="1162.2" r="2.1"/>
<circle cx="807.8" cy="1124.2" r="2.1"/>
<circle cx="807.8" cy="1131.3" r="2.1"/>
<circle cx="816.7" cy="1109.8" r="2.1"/>
<circle cx="816.7" cy="1117.0" r="2.1"/>
<circle cx="823.8" cy="1093.3" r="2.1"/>
<circle cx="832.7" cy="1093.3" r="2.1"/>
<circle cx="839.8" cy="1093.3" r="2.1"/>
<circle cx="848.7" cy="1093.3" r="2.1"/>
<circle cx="855.8" cy="1086.2" r="2.1"/>
<circle cx="864.7" cy="1086.2" r="2.1"/>
<circle cx="871.8" cy="1086.2" r="2.1"/>
<circle cx="880.7" cy="1079.0" r="2.1"/>
<circle cx="887.8" cy="1079.0" r="2.1"/>
<circle cx="896.7" cy="1079.0" r="2.1"/>
<circle cx="903.8" cy="1071.8" r="2.1"/>
<circle cx="912.7" cy="1071.8" r="2.1"/>
<circle cx="919.8" cy="1071.8" r="2.1"/>
<circle cx="928.7" cy="1071.8" r="2.1"/>
<circle cx="935.8" cy="1071.8" r="2.1"/>
<circle cx="944.7" cy="1055.3" r="2.1"/>
<circle cx="951.8" cy="1055.3" r="2.1"/>
<circle cx="960.7" cy="1055.3" r="2.1"/>
<circle cx="967.8" cy="1055.3" r="2.1"/>
<circle cx="976.7" cy="1055.3" r="2.1"/>
<circle cx="983.8" cy="1048.2" r="2.1"/>
<circle cx="992.7" cy="1048.2" r="2.1"/>
<circle cx="999.8" cy="1041.0" r="2.1"/>
<circle cx="1008.7" cy="1041.0" r="2.1"/>
<circle cx="1015.8" cy="1033.8" r="2.1"/>
<circle cx="1024.7" cy="1017.3" r="2.1"/>
<circle cx="1031.8" cy="1017.3" r="2.1"/>
<circle cx="1040.7" cy="1010.2" r="2.1"/>
<circle cx="1047.8" cy="1010.2" r="2.1"/>
<circle cx="1056.7" cy="1003.0" r="2.1"/>
<circle cx="1063.8" cy="995.8" r="2.1"/>
<circle cx="1072.7" cy="1003.0" r="2.1"/>
<circle cx="1079.8" cy="1003.0" r="2.1"/>
<circle cx="1088.7" cy="1003.0" r="2.1"/>
<circle cx="1095.8" cy="1003.0" r="2.1"/>
<circle cx="1104.7" cy="1003.0" r="2.1"/>
<circle cx="1111.8" cy="1003.0" r="2.1"/>
<circle cx="1120.7" cy="1003.0" r="2.1"/>
<circle cx="1127.8" cy="1003.0" r="2.1"/>
<circle cx="1136.7" cy="1003.0" r="2.1"/>
<circle cx="1143.8" cy="1003.0" r="2.1"/>
<circle cx="1152.7" cy="1003.0" r="2.1"/>
<circle cx="1159.8" cy="995.8" r="2.1"/>
<circle cx="1168.7" cy="995.8" r="2.1"/>
<circle cx="1175.8" cy="979.3" r="2.1"/>
<circle cx="1184.7" cy="979.3" r="2.1"/>
<circle cx="1191.8" cy="972.2" r="2.1"/>
<circle cx="1200.7" cy="972.2" r="2.1"/>
<circle cx="1207.8" cy="965.0" r="2.1"/>
<circle cx="1216.7" cy="965.0" r="2.1"/>
<circle cx="1223.8" cy="957.8" r="2.1"/>
<circle cx="1232.7" cy="965.0" r="2.1"/>
<circle cx="1239.8" cy="965.0" r="2.1"/>
<circle cx="1248.7" cy="965.0" r="2.1"/>
<circle cx="1255.8" cy="965.0" r="2.1"/>
<circle cx="1264.7" cy="965.0" r="2.1"/>
<circle cx="1271.8" cy="965.0" r="2.1"/>
<circle cx="1280.7" cy="965.0" r="2.1"/>
<circle cx="1287.8" cy="965.0" r="2.1"/>
<circle cx="1296.7" cy="965.0" r="2.1"/>
<circle cx="1303.8" cy="965.0" r="2.1"/>
<circle cx="1312.7" cy="972.2" r="2.1"/>
<circle cx="1319.8" cy="972.2" r="2.1"/>
<circle cx="1328.7" cy="972.2" r="2.1"/>
<circle cx="1335.8" cy="972.2" r="2.1"/>
<circle cx="1344.7" cy="972.2" r="2.1"/>
<circle cx="1351.8" cy="972.2" r="2.1"/>
<circle cx="1360.7" cy="972.2" r="2.1"/>
<circle cx="1367.8" cy="972.2" r="2.1"/>
<circle cx="1376.7" cy="972.2" r="2.1"/>
<circle cx="1383.8" cy="972.2" r="2.1"/>
<circle cx="1392.7" cy="972.2" r="2.1"/>
<circle cx="1399.8" cy="972.2" r="2.1"/>
<circle cx="1408.7" cy="965.0" r="2.1"/>
<circle cx="1415.8" cy="965.0" r="2.1"/>
<circle cx="1424.7" cy="957.8" r="2.1"/>
<circle cx="1431.8" cy="957.8" r="2.1"/>
<circle cx="1440.7" cy="957.8" r="2.1"/>
<circle cx="1447.8" cy="941.3" r="2.1"/>
<circle cx="1456.7" cy="941.3" r="2.1"/>
<circle cx="1463.8" cy="934.2" r="2.1"/>
<circle cx="1472.7" cy="941.3" r="2.1"/>
<circle cx="1479.8" cy="941.3" r="2.1"/>
<circle cx="1488.7" cy="941.3" r="2.1"/>
<circle cx="1495.8" cy="941.3" r="2.1"/>
<circle cx="1504.7" cy="941.3" r="2.1"/>
<circle cx="1511.8" cy="957.8" r="2.1"/>
<circle cx="1520.7" cy="957.8" r="2.1"/>
<circle cx="1527.8" cy="957.8" r="2.1"/>
<circle cx="1536.7" cy="957.8" r="2.1"/>
<circle cx="1543.8" cy="957.8" r="2.1"/>
<circle cx="1552.7" cy="965.0" r="2.1"/>
<circle cx="1559.8" cy="965.0" r="2.1"/>
<circle cx="1568.7" cy="965.0" r="2.1"/>
<circle cx="1575.8" cy="965.0" r="2.1"/>
<circle cx="1584.7" cy="972.2" r="2.1"/>
<circle cx="1591.8" cy="972.2" r="2.1"/>
<circle cx="1600.7" cy="972.2" r="2.1"/>
<circle cx="1607.8" cy="972.2" r="2.1"/>
<circle cx="1616.7" cy="972.2" r="2.1"/>
<circle cx="1623.8" cy="979.3" r="2.1"/>
<circle cx="1632.7" cy="979.3" r="2.1"/>
<circle cx="1639.8" cy="995.8" r="2.1"/>
<circle cx="1648.7" cy="995.8" r="2.1"/>
<circle cx="1655.8" cy="1003.0" r="2.1"/>
<circle cx="1664.7" cy="1003.0" r="2.1"/>
<circle cx="1671.8" cy="1010.2" r="2.1"/>
<circle cx="1680.7" cy="1010.2" r="2.1"/>
<circle cx="1687.8" cy="1017.3" r="2.1"/>
<circle cx="1696.7" cy="1017.3" r="2.1"/>
<circle cx="1703.8" cy="1017.3" r="2.1"/>
<circle cx="1712.7" cy="1010.2" r="2.1"/>
<circle cx="1719.8" cy="1003.0" r="2.1"/>
<circle cx="1728.7" cy="1003.0" r="2.1"/>
<circle cx="1735.8" cy="995.8" r="2.1"/>
<circle cx="1744.7" cy="979.3" r="2.1"/>
<circle cx="1751.8" cy="979.3" r="2.1"/>
<circle cx="1760.7" cy="972.2" r="2.1"/>
<circle cx="1767.8" cy="965.0" r="2.1"/>
<circle cx="1776.7" cy="957.8" r="2.1"/>
<circle cx="1783.8" cy="957.8" r="2.1"/>
<circle cx="1792.7" cy="957.8" r="2.1"/>
<circle cx="1799.8" cy="957.8" r="2.1"/>
<circle cx="1808.7" cy="957.8" r="2.1"/>
<circle cx="1815.8" cy="957.8" r="2.1"/>
<circle cx="1824.7" cy="957.8" r="2.1"/>
<circle cx="1831.8" cy="957.8" r="2.1"/>
<circle cx="1840.7" cy="957.8" r="2.1"/>
<circle cx="1847.8" cy="957.8" r="2.1"/>
<circle cx="1856.7" cy="957.8" r="2.1"/>
<circle cx="1863.8" cy="957.8" r="2.1"/>
<circle cx="1872.7" cy="957.8" r="2.1"/>
<circle cx="1879.8" cy="941.3" r="2.1"/>
<circle cx="1888.7" cy="941.3" r="2.1"/>
<circle cx="1895.8" cy="934.2" r="2.1"/>
<circle cx="1904.7" cy="934.2" r="2.1"/>
<circle cx="1911.8" cy="934.2" r="2.1"/>
<circle cx="1920.7" cy="927.0" r="2.1"/>
<circle cx="1927.8" cy="927.0" r="2.1"/>
<circle cx="1936.7" cy="919.8" r="2.1"/>
<circle cx="1943.8" cy="927.0" r="2.1"/>
<circle cx="1952.7" cy="927.0" r="2.1"/>
<circle cx="1959.8" cy="927.0" r="2.1"/>
<circle cx="1968.7" cy="927.0" r="2.1"/>
<circle cx="1975.8" cy="927.0" r="2.1"/>
<circle cx="1984.7" cy="934.2" r="2.1"/>
<circle cx="1991.8" cy="934.2" r="2.1"/>
<circle cx="2000.7" cy="934.2" r="2.1"/>
<circle cx="2007.8" cy="934.2" r="2.1"/>
<circle cx="2016.7" cy="934.2" r="2.1"/>
<circle cx="2023.8" cy="934.2" r="2.1"/>
<circle cx="2032.7" cy="934.2" r="2.1"/>
<circle cx="2039.8" cy="934.2" r="2.1"/>
<circle cx="2048.7" cy="934.2" r="2.1"/>
<circle cx="2055.8" cy="927.0" r="2.1"/>
<circle cx="2064.7" cy="927.0" r="2.1"/>
<circle cx="2071.8" cy="927.0" r="2.1"/>
<circle cx="2080.7" cy="927.0" r="2.1"/>
<circle cx="2087.8" cy="927.0" r="2.1"/>
<circle cx="2096.7" cy="919.8" r="2.1"/>
<circle cx="2103.8" cy="927.0" r="2.1"/>
<circle cx="2112.7" cy="927.0" r="2.1"/>
<circle cx="2119.8" cy="927.0" r="2.1"/>
<circle cx="2128.7" cy="927.0" r="2.1"/>
<circle cx="2135.8" cy="927.0" r="2.1"/>
<circle cx="2144.7" cy="934.2" r="2.1"/>
<circle cx="2151.8" cy="934.2" r="2.1"/>
<circle cx="2160.7" cy="934.2" r="2.1"/>
<circle cx="2167.8" cy="934.2" r="2.1"/>
<circle cx="2176.7" cy="934.2" r="2.1"/>
<circle cx="2183.8" cy="934.2" r="2.1"/>
<circle cx="2192.7" cy="934.2" r="2.1"/>
<circle cx="2199.8" cy="934.2" r="2.1"/>
<circle cx="2208.7" cy="934.2" r="2.1"/>
<circle cx="2215.8" cy="927.0" r="2.1"/>
<circle cx="2224.7" cy="927.0" r="2.1"/>
<circle cx="2231.8" cy="927.0" r="2.1"/>
<circle cx="2240.7" cy="927.0" r="2.1"/>
<circle cx="2247.8" cy="927.0" r="2.1"/>
<circle cx="2256.7" cy="919.8" r="2.1"/>
<circle cx="2263.8" cy="927.0" r="2.1"/>
<circle cx="2272.7" cy="927.0" r="2.1"/>
<circle cx="2279.8" cy="934.2" r="2.1"/>
<circle cx="2288.7" cy="934.2" r="2.1"/>
<circle cx="2295.8" cy="934.2" r="2.1"/>
<circle cx="2304.7" cy="941.3" r="2.1"/>
<circle cx="2311.8" cy="941.3" r="2.1"/>
<circle cx="2320.7" cy="957.8" r="2.1"/>
<circle cx="2327.8" cy="957.8" r="2.1"/>
<circle cx="2336.7" cy="957.8" r="2.1"/>
<circle cx="2343.8" cy="965.0" r="2.1"/>
<circle cx="2352.7" cy="965.0" r="2.1"/>
<circle cx="2359.8" cy="965.0" r="2.1"/>
<circle cx="2368.7" cy="965.0" r="2.1"/>
<circle cx="2375.8" cy="965.0" r="2.1"/>
<circle cx="2384.7" cy="965.0" r="2.1"/>
<circle cx="2391.8" cy="965.0" r="2.1"/>
<circle cx="2400.7" cy="965.0" r="2.1"/>
<circle cx="2407.8" cy="965.0" r="2.1"/>
<circle cx="2416.7" cy="965.0" r="2.1"/>
<circle cx="2423.8" cy="972.2" r="2.1"/>
<circle cx="2432.7" cy="972.2" r="2.1"/>
<circle cx="2439.8" cy="979.3" r="2.1"/>
<circle cx="2448.7" cy="979.3" r="2.1"/>
<circle cx="2455.8" cy="979.3" r="2.1"/>
<circle cx="2464.7" cy="995.8" r="2.1"/>
<circle cx="2471.8" cy="995.8" r="2.1"/>
<circle cx="2480.7" cy="1003.0" r="2.1"/>
<circle cx="2487.8" cy="1003.0" r="2.1"/>
<circle cx="2496.7" cy="1003.0" r="2.1"/>
<circle cx="2503.8" cy="1003.0" r="2.1"/>
<circle cx="2512.7" cy="1003.0" r="2.1"/>
<circle cx="2519.8" cy="1003.0" r="2.1"/>
<circle cx="2528.7" cy="1003.0" r="2.1"/>
<circle cx="2535.8" cy="1003.0" r="2.1"/>
<circle cx="2544.7" cy="1003.0" r="2.1"/>
<circle cx="2551.8" cy="1003.0" r="2.1"/>
<circle cx="2560.7" cy="1003.0" r="2.1"/>
<circle cx="2567.8" cy="995.8" r="2.1"/>
<circle cx="2576.7" cy="995.8" r="2.1"/>
<circle cx="2583.8" cy="979.3" r="2.1"/>
<circle cx="2592.7" cy="979.3" r="2.1"/>
<circle cx="2599.8" cy="972.2" r="2.1"/>
<circle cx="2608.7" cy="965.0" r="2.1"/>
<circle cx="2615.8" cy="965.0" r="2.1"/>
<circle cx="2624.7" cy="957.8" r="2.1"/>
<circle cx="2631.8" cy="957.8" r="2.1"/>
<circle cx="2640.7" cy="941.3" r="2.1"/>
<circle cx="2647.8" cy="934.2" r="2.1"/>
<circle cx="2656.7" cy="941.3" r="2.1"/>
<circle cx="2663.8" cy="941.3" r="2.1"/>
<circle cx="2672.7" cy="957.8" r="2.1"/>
<circle cx="2679.8" cy="957.8" r="2.1"/>
<circle cx="2688.7" cy="957.8" r="2.1"/>
<circle cx="2695.8" cy="965.0" r="2.1"/>
<circle cx="2704.7" cy="965.0" r="2.1"/>
<circle cx="2711.8" cy="972.2" r="2.1"/>
<circle cx="2720.7" cy="972.2" r="2.1"/>
<circle cx="2727.8" cy="972.2" r="2.1"/>
<circle cx="2736.7" cy="979.3" r="2.1"/>
<circle cx="2743.8" cy="979.3" r="2.1"/>
<circle cx="2752.7" cy="979.3" r="2.1"/>
<circle cx="2759.8" cy="979.3" r="2.1"/>
<circle cx="2768.7" cy="979.3" r="2.1"/>
<circle cx="2775.8" cy="995.8" r="2.1"/>
<circle cx="2784.7" cy="995.8" r="2.1"/>
<circle cx="2791.8" cy="995.8" r="2.1"/>
<circle cx="2800.7" cy="995.8" r="2.1"/>
<circle cx="2807.8" cy="995.8" r="2.1"/>
<circle cx="2816.7" cy="995.8" r="2.1"/>
<circle cx="2823.8" cy="979.3" r="2.1"/>
<circle cx="2832.7" cy="979.3" r="2.1"/>
<circle cx="2839.8" cy="972.2" r="2.1"/>
<circle cx="2848.7" cy="972.2" r="2.1"/>
<circle cx="2855.8" cy="965.0" r="2.1"/>
<circle cx="2864.7" cy="965.0" r="2.1"/>
<circle cx="2871.8" cy="957.8" r="2.1"/>
<circle cx="2880.7" cy="957.8" r="2.1"/>
<circle cx="2887.8" cy="941.3" r="2.1"/>
<circle cx="2896.7" cy="957.8" r="2.1"/>
<circle cx="2903.8" cy="965.0" r="2.1"/>
<circle cx="2912.7" cy="972.2" r="2.1"/>
<circle cx="2919.8" cy="972.2" r="2.1"/>
<circle cx="2928.7" cy="979.3" r="2.1"/>
<circle cx="2935.8" cy="995.8" r="2.1"/>
<circle cx="2944.7" cy="995.8" r="2.1"/>
<circle cx="2951.8" cy="1003.0" r="2.1"/>
<circle cx="2960.7" cy="1010.2" r="2.1"/>
<circle cx="2967.8" cy="1010.2" r="2.1"/>
</g>
<g fill="#10e8a0">
<circle cx="768.7" cy="1337.8" r="2.1"/>
<circle cx="775.8" cy="1321.3" r="2.1"/>
<circle cx="784.7" cy="1314.2" r="2.1"/>
<circle cx="791.8" cy="1307.0" r="2.1"/>
<circle cx="800.7" cy="1299.8" r="2.1"/>
<circle cx="807.8" cy="1283.3" r="2.1"/>
<circle cx="816.7" cy="1276.2" r="2.1"/>
<circle cx="823.8" cy="1269.0" r="2.1"/>
<circle cx="832.7" cy="1269.0" r="2.1"/>
<circle cx="839.8" cy="1269.0" r="2.1"/>
<circle cx="848.7" cy="1269.0" r="2.1"/>
<circle cx="855.8" cy="1269.0" r="2.1"/>
<circle cx="864.7" cy="1269.0" r="2.1"/>
<circle cx="871.8" cy="1269.0" r="2.1"/>
<circle cx="880.7" cy="1269.0" r="2.1"/>
<circle cx="887.8" cy="1269.0" r="2.1"/>
<circle cx="896.7" cy="1269.0" r="2.1"/>
<circle cx="903.8" cy="1261.8" r="2.1"/>
<circle cx="912.7" cy="1261.8" r="2.1"/>
<circle cx="919.8" cy="1261.8" r="2.1"/>
<circle cx="928.7" cy="1261.8" r="2.1"/>
<circle cx="935.8" cy="1261.8" r="2.1"/>
<circle cx="944.7" cy="1261.8" r="2.1"/>
<circle cx="951.8" cy="1261.8" r="2.1"/>
<circle cx="960.7" cy="1261.8" r="2.1"/>
<circle cx="967.8" cy="1261.8" r="2.1"/>
<circle cx="976.7" cy="1261.8" r="2.1"/>
<circle cx="983.8" cy="1245.3" r="2.1"/>
<circle cx="992.7" cy="1245.3" r="2.1"/>
<circle cx="999.8" cy="1245.3" r="2.1"/>
<circle cx="1008.7" cy="1245.3" r="2.1"/>
<circle cx="1015.8" cy="1238.2" r="2.1"/>
<circle cx="1024.7" cy="1238.2" r="2.1"/>
<circle cx="1031.8" cy="1238.2" r="2.1"/>
<circle cx="1040.7" cy="1231.0" r="2.1"/>
<circle cx="1047.8" cy="1231.0" r="2.1"/>
<circle cx="1056.7" cy="1231.0" r="2.1"/>
<circle cx="1063.8" cy="1223.8" r="2.1"/>
<circle cx="1072.7" cy="1231.0" r="2.1"/>
<circle cx="1079.8" cy="1231.0" r="2.1"/>
<circle cx="1088.7" cy="1231.0" r="2.1"/>
<circle cx="1095.8" cy="1231.0" r="2.1"/>
<circle cx="1104.7" cy="1231.0" r="2.1"/>
<circle cx="1111.8" cy="1231.0" r="2.1"/>
<circle cx="1120.7" cy="1231.0" r="2.1"/>
<circle cx="1127.8" cy="1231.0" r="2.1"/>
<circle cx="1136.7" cy="1231.0" r="2.1"/>
<circle cx="1143.8" cy="1231.0" r="2.1"/>
<circle cx="1152.7" cy="1231.0" r="2.1"/>
<circle cx="1159.8" cy="1231.0" r="2.1"/>
<circle cx="1168.7" cy="1231.0" r="2.1"/>
<circle cx="1175.8" cy="1231.0" r="2.1"/>
<circle cx="1184.7" cy="1223.8" r="2.1"/>
<circle cx="1191.8" cy="1223.8" r="2.1"/>
<circle cx="1200.7" cy="1223.8" r="2.1"/>
<circle cx="1207.8" cy="1223.8" r="2.1"/>
<circle cx="1216.7" cy="1223.8" r="2.1"/>
<circle cx="1223.8" cy="1207.3" r="2.1"/>
<circle cx="1232.7" cy="1223.8" r="2.1"/>
<circle cx="1239.8" cy="1223.8" r="2.1"/>
<circle cx="1248.7" cy="1223.8" r="2.1"/>
<circle cx="1255.8" cy="1223.8" r="2.1"/>
<circle cx="1264.7" cy="1223.8" r="2.1"/>
<circle cx="1271.8" cy="1223.8" r="2.1"/>
<circle cx="1280.7" cy="1223.8" r="2.1"/>
<circle cx="1287.8" cy="1223.8" r="2.1"/>
<circle cx="1296.7" cy="1223.8" r="2.1"/>
<circle cx="1303.8" cy="1223.8" r="2.1"/>
<circle cx="1312.7" cy="1223.8" r="2.1"/>
<circle cx="1319.8" cy="1223.8" r="2.1"/>
<circle cx="1328.7" cy="1223.8" r="2.1"/>
<circle cx="1335.8" cy="1223.8" r="2.1"/>
<circle cx="1344.7" cy="1223.8" r="2.1"/>
<circle cx="1351.8" cy="1223.8" r="2.1"/>
<circle cx="1360.7" cy="1223.8" r="2.1"/>
<circle cx="1367.8" cy="1223.8" r="2.1"/>
<circle cx="1376.7" cy="1223.8" r="2.1"/>
<circle cx="1383.8" cy="1223.8" r="2.1"/>
<circle cx="1392.7" cy="1223.8" r="2.1"/>
<circle cx="1399.8" cy="1223.8" r="2.1"/>
<circle cx="1408.7" cy="1223.8" r="2.1"/>
<circle cx="1415.8" cy="1223.8" r="2.1"/>
<circle cx="1424.7" cy="1207.3" r="2.1"/>
<circle cx="1431.8" cy="1207.3" r="2.1"/>
<circle cx="1440.7" cy="1207.3" r="2.1"/>
<circle cx="1447.8" cy="1207.3" r="2.1"/>
<circle cx="1456.7" cy="1207.3" r="2.1"/>
<circle cx="1463.8" cy="1200.2" r="2.1"/>
<circle cx="1472.7" cy="1200.2" r="2.1"/>
<circle cx="1479.8" cy="1200.2" r="2.1"/>
<circle cx="1488.7" cy="1200.2" r="2.1"/>
<circle cx="1495.8" cy="1200.2" r="2.1"/>
<circle cx="1504.7" cy="1200.2" r="2.1"/>
<circle cx="1511.8" cy="1200.2" r="2.1"/>
<circle cx="1520.7" cy="1200.2" r="2.1"/>
<circle cx="1527.8" cy="1200.2" r="2.1"/>
<circle cx="1536.7" cy="1200.2" r="2.1"/>
<circle cx="1543.8" cy="1200.2" r="2.1"/>
<circle cx="1552.7" cy="1207.3" r="2.1"/>
<circle cx="1559.8" cy="1207.3" r="2.1"/>
<circle cx="1568.7" cy="1207.3" r="2.1"/>
<circle cx="1575.8" cy="1207.3" r="2.1"/>
<circle cx="1584.7" cy="1207.3" r="2.1"/>
<circle cx="1591.8" cy="1207.3" r="2.1"/>
<circle cx="1600.7" cy="1207.3" r="2.1"/>
<circle cx="1607.8" cy="1207.3" r="2.1"/>
<circle cx="1616.7" cy="1207.3" r="2.1"/>
<circle cx="1623.8" cy="1223.8" r="2.1"/>
<circle cx="1632.7" cy="1223.8" r="2.1"/>
<circle cx="1639.8" cy="1223.8" r="2.1"/>
<circle cx="1648.7" cy="1231.0" r="2.1"/>
<circle cx="1655.8" cy="1231.0" r="2.1"/>
<circle cx="1664.7" cy="1231.0" r="2.1"/>
<circle cx="1671.8" cy="1238.2" r="2.1"/>
<circle cx="1680.7" cy="1238.2" r="2.1"/>
<circle cx="1687.8" cy="1238.2" r="2.1"/>
<circle cx="1696.7" cy="1238.2" r="2.1"/>
<circle cx="1703.8" cy="1238.2" r="2.1"/>
<circle cx="1712.7" cy="1238.2" r="2.1"/>
<circle cx="1719.8" cy="1231.0" r="2.1"/>
<circle cx="1728.7" cy="1231.0" r="2.1"/>
<circle cx="1735.8" cy="1223.8" r="2.1"/>
<circle cx="1744.7" cy="1223.8" r="2.1"/>
<circle cx="1751.8" cy="1223.8" r="2.1"/>
<circle cx="1760.7" cy="1207.3" r="2.1"/>
<circle cx="1767.8" cy="1207.3" r="2.1"/>
<circle cx="1776.7" cy="1200.2" r="2.1"/>
<circle cx="1783.8" cy="1207.3" r="2.1"/>
<circle cx="1792.7" cy="1207.3" r="2.1"/>
<circle cx="1799.8" cy="1207.3" r="2.1"/>
<circle cx="1808.7" cy="1207.3" r="2.1"/>
<circle cx="1815.8" cy="1207.3" r="2.1"/>
<circle cx="1824.7" cy="1207.3" r="2.1"/>
<circle cx="1831.8" cy="1207.3" r="2.1"/>
<circle cx="1840.7" cy="1207.3" r="2.1"/>
<circle cx="1847.8" cy="1207.3" r="2.1"/>
<circle cx="1856.7" cy="1207.3" r="2.1"/>
<circle cx="1863.8" cy="1207.3" r="2.1"/>
<circle cx="1872.7" cy="1207.3" r="2.1"/>
<circle cx="1879.8" cy="1207.3" r="2.1"/>
<circle cx="1888.7" cy="1207.3" r="2.1"/>
<circle cx="1895.8" cy="1200.2" r="2.1"/>
<circle cx="1904.7" cy="1200.2" r="2.1"/>
<circle cx="1911.8" cy="1200.2" r="2.1"/>
<circle cx="1920.7" cy="1200.2" r="2.1"/>
<circle cx="1927.8" cy="1200.2" r="2.1"/>
<circle cx="1936.7" cy="1193.0" r="2.1"/>
<circle cx="1943.8" cy="1193.0" r="2.1"/>
<circle cx="1952.7" cy="1193.0" r="2.1"/>
<circle cx="1959.8" cy="1193.0" r="2.1"/>
<circle cx="1968.7" cy="1193.0" r="2.1"/>
<circle cx="1975.8" cy="1193.0" r="2.1"/>
<circle cx="1984.7" cy="1193.0" r="2.1"/>
<circle cx="1991.8" cy="1193.0" r="2.1"/>
<circle cx="2000.7" cy="1193.0" r="2.1"/>
<circle cx="2007.8" cy="1193.0" r="2.1"/>
<circle cx="2016.7" cy="1193.0" r="2.1"/>
<circle cx="2023.8" cy="1193.0" r="2.1"/>
<circle cx="2032.7" cy="1193.0" r="2.1"/>
<circle cx="2039.8" cy="1193.0" r="2.1"/>
<circle cx="2048.7" cy="1193.0" r="2.1"/>
<circle cx="2055.8" cy="1193.0" r="2.1"/>
<circle cx="2064.7" cy="1193.0" r="2.1"/>
<circle cx="2071.8" cy="1193.0" r="2.1"/>
<circle cx="2080.7" cy="1193.0" r="2.1"/>
<circle cx="2087.8" cy="1193.0" r="2.1"/>
<circle cx="2096.7" cy="1193.0" r="2.1"/>
<circle cx="2103.8" cy="1200.2" r="2.1"/>
<circle cx="2112.7" cy="1200.2" r="2.1"/>
<circle cx="2119.8" cy="1200.2" r="2.1"/>
<circle cx="2128.7" cy="1200.2" r="2.1"/>
<circle cx="2135.8" cy="1200.2" r="2.1"/>
<circle cx="2144.7" cy="1200.2" r="2.1"/>
<circle cx="2151.8" cy="1200.2" r="2.1"/>
<circle cx="2160.7" cy="1200.2" r="2.1"/>
<circle cx="2167.8" cy="1200.2" r="2.1"/>
<circle cx="2176.7" cy="1200.2" r="2.1"/>
<circle cx="2183.8" cy="1200.2" r="2.1"/>
<circle cx="2192.7" cy="1200.2" r="2.1"/>
<circle cx="2199.8" cy="1200.2" r="2.1"/>
<circle cx="2208.7" cy="1200.2" r="2.1"/>
<circle cx="2215.8" cy="1200.2" r="2.1"/>
<circle cx="2224.7" cy="1200.2" r="2.1"/>
<circle cx="2231.8" cy="1200.2" r="2.1"/>
<circle cx="2240.7" cy="1200.2" r="2.1"/>
<circle cx="2247.8" cy="1200.2" r="2.1"/>
<circle cx="2256.7" cy="1193.0" r="2.1"/>
<circle cx="2263.8" cy="1200.2" r="2.1"/>
<circle cx="2272.7" cy="1200.2" r="2.1"/>
<circle cx="2279.8" cy="1200.2" r="2.1"/>
<circle cx="2288.7" cy="1200.2" r="2.1"/>
<circle cx="2295.8" cy="1200.2" r="2.1"/>
<circle cx="2304.7" cy="1207.3" r="2.1"/>
<circle cx="2311.8" cy="1207.3" r="2.1"/>
<circle cx="2320.7" cy="1207.3" r="2.1"/>
<circle cx="2327.8" cy="1207.3" r="2.1"/>
<circle cx="2336.7" cy="1207.3" r="2.1"/>
<circle cx="2343.8" cy="1207.3" r="2.1"/>
<circle cx="2352.7" cy="1207.3" r="2.1"/>
<circle cx="2359.8" cy="1207.3" r="2.1"/>
<circle cx="2368.7" cy="1207.3" r="2.1"/>
<circle cx="2375.8" cy="1207.3" r="2.1"/>
<circle cx="2384.7" cy="1207.3" r="2.1"/>
<circle cx="2391.8" cy="1207.3" r="2.1"/>
<circle cx="2400.7" cy="1207.3" r="2.1"/>
<circle cx="2407.8" cy="1207.3" r="2.1"/>
<circle cx="2416.7" cy="1200.2" r="2.1"/>
<circle cx="2423.8" cy="1207.3" r="2.1"/>
<circle cx="2432.7" cy="1207.3" r="2.1"/>
<circle cx="2439.8" cy="1207.3" r="2.1"/>
<circle cx="2448.7" cy="1223.8" r="2.1"/>
<circle cx="2455.8" cy="1223.8" r="2.1"/>
<circle cx="2464.7" cy="1223.8" r="2.1"/>
<circle cx="2471.8" cy="1231.0" r="2.1"/>
<circle cx="2480.7" cy="1231.0" r="2.1"/>
<circle cx="2487.8" cy="1231.0" r="2.1"/>
<circle cx="2496.7" cy="1231.0" r="2.1"/>
<circle cx="2503.8" cy="1231.0" r="2.1"/>
<circle cx="2512.7" cy="1231.0" r="2.1"/>
<circle cx="2519.8" cy="1231.0" r="2.1"/>
<circle cx="2528.7" cy="1231.0" r="2.1"/>
<circle cx="2535.8" cy="1231.0" r="2.1"/>
<circle cx="2544.7" cy="1231.0" r="2.1"/>
<circle cx="2551.8" cy="1231.0" r="2.1"/>
<circle cx="2560.7" cy="1231.0" r="2.1"/>
<circle cx="2567.8" cy="1223.8" r="2.1"/>
<circle cx="2576.7" cy="1223.8" r="2.1"/>
<circle cx="2583.8" cy="1223.8" r="2.1"/>
<circle cx="2592.7" cy="1223.8" r="2.1"/>
<circle cx="2599.8" cy="1207.3" r="2.1"/>
<circle cx="2608.7" cy="1207.3" r="2.1"/>
<circle cx="2615.8" cy="1207.3" r="2.1"/>
<circle cx="2624.7" cy="1200.2" r="2.1"/>
<circle cx="2631.8" cy="1200.2" r="2.1"/>
<circle cx="2640.7" cy="1200.2" r="2.1"/>
<circle cx="2647.8" cy="1193.0" r="2.1"/>
<circle cx="2656.7" cy="1200.2" r="2.1"/>
<circle cx="2663.8" cy="1200.2" r="2.1"/>
<circle cx="2672.7" cy="1200.2" r="2.1"/>
<circle cx="2679.8" cy="1200.2" r="2.1"/>
<circle cx="2688.7" cy="1200.2" r="2.1"/>
<circle cx="2695.8" cy="1207.3" r="2.1"/>
<circle cx="2704.7" cy="1207.3" r="2.1"/>
<circle cx="2711.8" cy="1207.3" r="2.1"/>
<circle cx="2720.7" cy="1207.3" r="2.1"/>
<circle cx="2727.8" cy="1207.3" r="2.1"/>
<circle cx="2736.7" cy="1223.8" r="2.1"/>
<circle cx="2743.8" cy="1223.8" r="2.1"/>
<circle cx="2752.7" cy="1223.8" r="2.1"/>
<circle cx="2759.8" cy="1223.8" r="2.1"/>
<circle cx="2768.7" cy="1223.8" r="2.1"/>
<circle cx="2775.8" cy="1231.0" r="2.1"/>
<circle cx="2784.7" cy="1231.0" r="2.1"/>
<circle cx="2791.8" cy="1231.0" r="2.1"/>
<circle cx="2800.7" cy="1231.0" r="2.1"/>
<circle cx="2807.8" cy="1231.0" r="2.1"/>
<circle cx="2816.7" cy="1231.0" r="2.1"/>
<circle cx="2823.8" cy="1231.0" r="2.1"/>
<circle cx="2832.7" cy="1231.0" r="2.1"/>
<circle cx="2839.8" cy="1223.8" r="2.1"/>
<circle cx="2848.7" cy="1223.8" r="2.1"/>
<circle cx="2855.8" cy="1223.8" r="2.1"/>
<circle cx="2864.7" cy="1207.3" r="2.1"/>
<circle cx="2871.8" cy="1207.3" r="2.1"/>
<circle cx="2880.7" cy="1207.3" r="2.1"/>
<circle cx="2887.8" cy="1200.2" r="2.1"/>
<circle cx="2896.7" cy="1207.3" r="2.1"/>
<circle cx="2903.8" cy="1207.3" r="2.1"/>
<circle cx="2912.7" cy="1223.8" r="2.1"/>
<circle cx="2919.8" cy="1223.8" r="2.1"/>
<circle cx="2928.7" cy="1223.8" r="2.1"/>
<circle cx="2935.8" cy="1231.0" r="2.1"/>
<circle cx="2944.7" cy="1231.0" r="2.1"/>
<circle cx="2951.8" cy="1238.2" r="2.1"/>
<circle cx="2960.7" cy="1238.2" r="2.1"/>
<circle cx="2967.8" cy="1238.2" r="2.1"/>
</g>
<g fill="#fcd462">
<circle cx="743.8" cy="1352.2" r="2.1"/>
<circle cx="743.8" cy="1359.3" r="2.1"/>
<circle cx="752.7" cy="1345.0" r="2.1"/>
<circle cx="759.8" cy="1337.8" r="2.1"/>
<circle cx="768.7" cy="1314.2" r="2.1"/>
<circle cx="775.8" cy="1307.0" r="2.1"/>
<circle cx="784.7" cy="1283.3" r="2.1"/>
<circle cx="784.7" cy="1299.8" r="2.1"/>
<circle cx="791.8" cy="1276.2" r="2.1"/>
<circle cx="800.7" cy="1261.8" r="2.1"/>
<circle cx="800.7" cy="1269.0" r="2.1"/>
<circle cx="807.8" cy="1245.3" r="2.1"/>
<circle cx="816.7" cy="1238.2" r="2.1"/>
<circle cx="823.8" cy="1231.0" r="2.1"/>
<circle cx="832.7" cy="1231.0" r="2.1"/>
<circle cx="839.8" cy="1231.0" r="2.1"/>
<circle cx="848.7" cy="1231.0" r="2.1"/>
<circle cx="855.8" cy="1231.0" r="2.1"/>
<circle cx="864.7" cy="1223.8" r="2.1"/>
<circle cx="871.8" cy="1223.8" r="2.1"/>
<circle cx="880.7" cy="1223.8" r="2.1"/>
<circle cx="887.8" cy="1223.8" r="2.1"/>
<circle cx="896.7" cy="1223.8" r="2.1"/>
<circle cx="903.8" cy="1207.3" r="2.1"/>
<circle cx="912.7" cy="1207.3" r="2.1"/>
<circle cx="919.8" cy="1207.3" r="2.1"/>
<circle cx="928.7" cy="1207.3" r="2.1"/>
<circle cx="935.8" cy="1207.3" r="2.1"/>
<circle cx="944.7" cy="1207.3" r="2.1"/>
<circle cx="951.8" cy="1207.3" r="2.1"/>
<circle cx="960.7" cy="1207.3" r="2.1"/>
<circle cx="967.8" cy="1207.3" r="2.1"/>
<circle cx="976.7" cy="1207.3" r="2.1"/>
<circle cx="983.8" cy="1200.2" r="2.1"/>
<circle cx="992.7" cy="1200.2" r="2.1"/>
<circle cx="999.8" cy="1200.2" r="2.1"/>
<circle cx="1008.7" cy="1200.2" r="2.1"/>
<circle cx="1015.8" cy="1193.0" r="2.1"/>
<circle cx="1024.7" cy="1193.0" r="2.1"/>
<circle cx="1031.8" cy="1193.0" r="2.1"/>
<circle cx="1040.7" cy="1185.8" r="2.1"/>
<circle cx="1047.8" cy="1185.8" r="2.1"/>
<circle cx="1056.7" cy="1185.8" r="2.1"/>
<circle cx="1063.8" cy="1169.3" r="2.1"/>
<circle cx="1072.7" cy="1169.3" r="2.1"/>
<circle cx="1079.8" cy="1169.3" r="2.1"/>
<circle cx="1088.7" cy="1169.3" r="2.1"/>
<circle cx="1095.8" cy="1169.3" r="2.1"/>
<circle cx="1104.7" cy="1169.3" r="2.1"/>
<circle cx="1111.8" cy="1169.3" r="2.1"/>
<circle cx="1120.7" cy="1169.3" r="2.1"/>
<circle cx="1127.8" cy="1169.3" r="2.1"/>
<circle cx="1136.7" cy="1169.3" r="2.1"/>
<circle cx="1143.8" cy="1169.3" r="2.1"/>
<circle cx="1152.7" cy="1169.3" r="2.1"/>
<circle cx="1159.8" cy="1169.3" r="2.1"/>
<circle cx="1168.7" cy="1169.3" r="2.1"/>
<circle cx="1175.8" cy="1162.2" r="2.1"/>
<circle cx="1184.7" cy="1162.2" r="2.1"/>
<circle cx="1191.8" cy="1162.2" r="2.1"/>
<circle cx="1200.7" cy="1155.0" r="2.1"/>
<circle cx="1207.8" cy="1155.0" r="2.1"/>
<circle cx="1216.7" cy="1155.0" r="2.1"/>
<circle cx="1223.8" cy="1147.8" r="2.1"/>
<circle cx="1232.7" cy="1155.0" r="2.1"/>
<circle cx="1239.8" cy="1155.0" r="2.1"/>
<circle cx="1248.7" cy="1155.0" r="2.1"/>
<circle cx="1255.8" cy="1155.0" r="2.1"/>
<circle cx="1264.7" cy="1155.0" r="2.1"/>
<circle cx="1271.8" cy="1155.0" r="2.1"/>
<circle cx="1280.7" cy="1155.0" r="2.1"/>
<circle cx="1287.8" cy="1155.0" r="2.1"/>
<circle cx="1296.7" cy="1155.0" r="2.1"/>
<circle cx="1303.8" cy="1155.0" r="2.1"/>
<circle cx="1312.7" cy="1155.0" r="2.1"/>
<circle cx="1319.8" cy="1155.0" r="2.1"/>
<circle cx="1328.7" cy="1155.0" r="2.1"/>
<circle cx="1335.8" cy="1155.0" r="2.1"/>
<circle cx="1344.7" cy="1155.0" r="2.1"/>
<circle cx="1351.8" cy="1155.0" r="2.1"/>
<circle cx="1360.7" cy="1155.0" r="2.1"/>
<circle cx="1367.8" cy="1155.0" r="2.1"/>
<circle cx="1376.7" cy="1155.0" r="2.1"/>
<circle cx="1383.8" cy="1155.0" r="2.1"/>
<circle cx="1392.7" cy="1155.0" r="2.1"/>
<circle cx="1399.8" cy="1155.0" r="2.1"/>
<circle cx="1408.7" cy="1155.0" r="2.1"/>
<circle cx="1415.8" cy="1155.0" r="2.1"/>
<circle cx="1424.7" cy="1147.8" r="2.1"/>
<circle cx="1431.8" cy="1147.8" r="2.1"/>
<circle cx="1440.7" cy="1147.8" r="2.1"/>
<circle cx="1447.8" cy="1147.8" r="2.1"/>
<circle cx="1456.7" cy="1147.8" r="2.1"/>
<circle cx="1463.8" cy="1131.3" r="2.1"/>
<circle cx="1472.7" cy="1147.8" r="2.1"/>
<circle cx="1479.8" cy="1147.8" r="2.1"/>
<circle cx="1488.7" cy="1147.8" r="2.1"/>
<circle cx="1495.8" cy="1147.8" r="2.1"/>
<circle cx="1504.7" cy="1147.8" r="2.1"/>
<circle cx="1511.8" cy="1147.8" r="2.1"/>
<circle cx="1520.7" cy="1147.8" r="2.1"/>
<circle cx="1527.8" cy="1147.8" r="2.1"/>
<circle cx="1536.7" cy="1147.8" r="2.1"/>
<circle cx="1543.8" cy="1147.8" r="2.1"/>
<circle cx="1552.7" cy="1155.0" r="2.1"/>
<circle cx="1559.8" cy="1155.0" r="2.1"/>
<circle cx="1568.7" cy="1155.0" r="2.1"/>
<circle cx="1575.8" cy="1155.0" r="2.1"/>
<circle cx="1584.7" cy="1162.2" r="2.1"/>
<circle cx="1591.8" cy="1162.2" r="2.1"/>
<circle cx="1600.7" cy="1162.2" r="2.1"/>
<circle cx="1607.8" cy="1162.2" r="2.1"/>
<circle cx="1616.7" cy="1162.2" r="2.1"/>
<circle cx="1623.8" cy="1169.3" r="2.1"/>
<circle cx="1632.7" cy="1169.3" r="2.1"/>
<circle cx="1639.8" cy="1169.3" r="2.1"/>
<circle cx="1648.7" cy="1169.3" r="2.1"/>
<circle cx="1655.8" cy="1169.3" r="2.1"/>
<circle cx="1664.7" cy="1185.8" r="2.1"/>
<circle cx="1671.8" cy="1185.8" r="2.1"/>
<circle cx="1680.7" cy="1185.8" r="2.1"/>
<circle cx="1687.8" cy="1185.8" r="2.1"/>
<circle cx="1696.7" cy="1185.8" r="2.1"/>
<circle cx="1703.8" cy="1185.8" r="2.1"/>
<circle cx="1712.7" cy="1185.8" r="2.1"/>
<circle cx="1719.8" cy="1185.8" r="2.1"/>
<circle cx="1728.7" cy="1169.3" r="2.1"/>
<circle cx="1735.8" cy="1169.3" r="2.1"/>
<circle cx="1744.7" cy="1169.3" r="2.1"/>
<circle cx="1751.8" cy="1162.2" r="2.1"/>
<circle cx="1760.7" cy="1162.2" r="2.1"/>
<circle cx="1767.8" cy="1162.2" r="2.1"/>
<circle cx="1776.7" cy="1155.0" r="2.1"/>
<circle cx="1783.8" cy="1155.0" r="2.1"/>
<circle cx="1792.7" cy="1155.0" r="2.1"/>
<circle cx="1799.8" cy="1155.0" r="2.1"/>
<circle cx="1808.7" cy="1155.0" r="2.1"/>
<circle cx="1815.8" cy="1155.0" r="2.1"/>
<circle cx="1824.7" cy="1155.0" r="2.1"/>
<circle cx="1831.8" cy="1155.0" r="2.1"/>
<circle cx="1840.7" cy="1155.0" r="2.1"/>
<circle cx="1847.8" cy="1155.0" r="2.1"/>
<circle cx="1856.7" cy="1147.8" r="2.1"/>
<circle cx="1863.8" cy="1147.8" r="2.1"/>
<circle cx="1872.7" cy="1147.8" r="2.1"/>
<circle cx="1879.8" cy="1147.8" r="2.1"/>
<circle cx="1888.7" cy="1147.8" r="2.1"/>
<circle cx="1895.8" cy="1131.3" r="2.1"/>
<circle cx="1904.7" cy="1131.3" r="2.1"/>
<circle cx="1911.8" cy="1131.3" r="2.1"/>
<circle cx="1920.7" cy="1131.3" r="2.1"/>
<circle cx="1927.8" cy="1131.3" r="2.1"/>
<circle cx="1936.7" cy="1124.2" r="2.1"/>
<circle cx="1943.8" cy="1131.3" r="2.1"/>
<circle cx="1952.7" cy="1131.3" r="2.1"/>
<circle cx="1959.8" cy="1131.3" r="2.1"/>
<circle cx="1968.7" cy="1131.3" r="2.1"/>
<circle cx="1975.8" cy="1131.3" r="2.1"/>
<circle cx="1984.7" cy="1131.3" r="2.1"/>
<circle cx="1991.8" cy="1131.3" r="2.1"/>
<circle cx="2000.7" cy="1131.3" r="2.1"/>
<circle cx="2007.8" cy="1131.3" r="2.1"/>
<circle cx="2016.7" cy="1131.3" r="2.1"/>
<circle cx="2023.8" cy="1131.3" r="2.1"/>
<circle cx="2032.7" cy="1131.3" r="2.1"/>
<circle cx="2039.8" cy="1131.3" r="2.1"/>
<circle cx="2048.7" cy="1131.3" r="2.1"/>
<circle cx="2055.8" cy="1131.3" r="2.1"/>
<circle cx="2064.7" cy="1131.3" r="2.1"/>
<circle cx="2071.8" cy="1131.3" r="2.1"/>
<circle cx="2080.7" cy="1131.3" r="2.1"/>
<circle cx="2087.8" cy="1131.3" r="2.1"/>
<circle cx="2096.7" cy="1124.2" r="2.1"/>
<circle cx="2103.8" cy="1131.3" r="2.1"/>
<circle cx="2112.7" cy="1131.3" r="2.1"/>
<circle cx="2119.8" cy="1131.3" r="2.1"/>
<circle cx="2128.7" cy="1131.3" r="2.1"/>
<circle cx="2135.8" cy="1131.3" r="2.1"/>
<circle cx="2144.7" cy="1131.3" r="2.1"/>
<circle cx="2151.8" cy="1131.3" r="2.1"/>
<circle cx="2160.7" cy="1131.3" r="2.1"/>
<circle cx="2167.8" cy="1131.3" r="2.1"/>
<circle cx="2176.7" cy="1131.3" r="2.1"/>
<circle cx="2183.8" cy="1131.3" r="2.1"/>
<circle cx="2192.7" cy="1131.3" r="2.1"/>
<circle cx="2199.8" cy="1131.3" r="2.1"/>
<circle cx="2208.7" cy="1131.3" r="2.1"/>
<circle cx="2215.8" cy="1131.3" r="2.1"/>
<circle cx="2224.7" cy="1131.3" r="2.1"/>
<circle cx="2231.8" cy="1131.3" r="2.1"/>
<circle cx="2240.7" cy="1131.3" r="2.1"/>
<circle cx="2247.8" cy="1131.3" r="2.1"/>
<circle cx="2256.7" cy="1124.2" r="2.1"/>
<circle cx="2263.8" cy="1131.3" r="2.1"/>
<circle cx="2272.7" cy="1131.3" r="2.1"/>
<circle cx="2279.8" cy="1131.3" r="2.1"/>
<circle cx="2288.7" cy="1131.3" r="2.1"/>
<circle cx="2295.8" cy="1131.3" r="2.1"/>
<circle cx="2304.7" cy="1147.8" r="2.1"/>
<circle cx="2311.8" cy="1147.8" r="2.1"/>
<circle cx="2320.7" cy="1147.8" r="2.1"/>
<circle cx="2327.8" cy="1147.8" r="2.1"/>
<circle cx="2336.7" cy="1147.8" r="2.1"/>
<circle cx="2343.8" cy="1155.0" r="2.1"/>
<circle cx="2352.7" cy="1155.0" r="2.1"/>
<circle cx="2359.8" cy="1155.0" r="2.1"/>
<circle cx="2368.7" cy="1155.0" r="2.1"/>
<circle cx="2375.8" cy="1155.0" r="2.1"/>
<circle cx="2384.7" cy="1155.0" r="2.1"/>
<circle cx="2391.8" cy="1155.0" r="2.1"/>
<circle cx="2400.7" cy="1155.0" r="2.1"/>
<circle cx="2407.8" cy="1155.0" r="2.1"/>
<circle cx="2416.7" cy="1155.0" r="2.1"/>
<circle cx="2423.8" cy="1162.2" r="2.1"/>
<circle cx="2432.7" cy="1162.2" r="2.1"/>
<circle cx="2439.8" cy="1162.2" r="2.1"/>
<circle cx="2448.7" cy="1162.2" r="2.1"/>
<circle cx="2455.8" cy="1162.2" r="2.1"/>
<circle cx="2464.7" cy="1169.3" r="2.1"/>
<circle cx="2471.8" cy="1169.3" r="2.1"/>
<circle cx="2480.7" cy="1169.3" r="2.1"/>
<circle cx="2487.8" cy="1169.3" r="2.1"/>
<circle cx="2496.7" cy="1169.3" r="2.1"/>
<circle cx="2503.8" cy="1169.3" r="2.1"/>
<circle cx="2512.7" cy="1169.3" r="2.1"/>
<circle cx="2519.8" cy="1169.3" r="2.1"/>
<circle cx="2528.7" cy="1169.3" r="2.1"/>
<circle cx="2535.8" cy="1169.3" r="2.1"/>
<circle cx="2544.7" cy="1169.3" r="2.1"/>
<circle cx="2551.8" cy="1169.3" r="2.1"/>
<circle cx="2560.7" cy="1169.3" r="2.1"/>
<circle cx="2567.8" cy="1162.2" r="2.1"/>
<circle cx="2576.7" cy="1162.2" r="2.1"/>
<circle cx="2583.8" cy="1162.2" r="2.1"/>
<circle cx="2592.7" cy="1162.2" r="2.1"/>
<circle cx="2599.8" cy="1162.2" r="2.1"/>
<circle cx="2608.7" cy="1155.0" r="2.1"/>
<circle cx="2615.8" cy="1155.0" r="2.1"/>
<circle cx="2624.7" cy="1155.0" r="2.1"/>
<circle cx="2631.8" cy="1155.0" r="2.1"/>
<circle cx="2640.7" cy="1155.0" r="2.1"/>
<circle cx="2647.8" cy="1147.8" r="2.1"/>
<circle cx="2656.7" cy="1155.0" r="2.1"/>
<circle cx="2663.8" cy="1155.0" r="2.1"/>
<circle cx="2672.7" cy="1155.0" r="2.1"/>
<circle cx="2679.8" cy="1155.0" r="2.1"/>
<circle cx="2688.7" cy="1155.0" r="2.1"/>
<circle cx="2695.8" cy="1162.2" r="2.1"/>
<circle cx="2704.7" cy="1162.2" r="2.1"/>
<circle cx="2711.8" cy="1162.2" r="2.1"/>
<circle cx="2720.7" cy="1162.2" r="2.1"/>
<circle cx="2727.8" cy="1162.2" r="2.1"/>
<circle cx="2736.7" cy="1169.3" r="2.1"/>
<circle cx="2743.8" cy="1169.3" r="2.1"/>
<circle cx="2752.7" cy="1169.3" r="2.1"/>
<circle cx="2759.8" cy="1169.3" r="2.1"/>
<circle cx="2768.7" cy="1169.3" r="2.1"/>
<circle cx="2775.8" cy="1169.3" r="2.1"/>
<circle cx="2784.7" cy="1169.3" r="2.1"/>
<circle cx="2791.8" cy="1169.3" r="2.1"/>
<circle cx="2800.7" cy="1169.3" r="2.1"/>
<circle cx="2807.8" cy="1169.3" r="2.1"/>
<circle cx="2816.7" cy="1169.3" r="2.1"/>
<circle cx="2823.8" cy="1169.3" r="2.1"/>
<circle cx="2832.7" cy="1169.3" r="2.1"/>
<circle cx="2839.8" cy="1162.2" r="2.1"/>
<circle cx="2848.7" cy="1162.2" r="2.1"/>
<circle cx="2855.8" cy="1162.2" r="2.1"/>
<circle cx="2864.7" cy="1155.0" r="2.1"/>
<circle cx="2871.8" cy="1155.0" r="2.1"/>
<circle cx="2880.7" cy="1155.0" r="2.1"/>
<circle cx="2887.8" cy="1147.8" r="2.1"/>
<circle cx="2896.7" cy="1155.0" r="2.1"/>
<circle cx="2903.8" cy="1155.0" r="2.1"/>
<circle cx="2912.7" cy="1162.2" r="2.1"/>
<circle cx="2919.8" cy="1162.2" r="2.1"/>
<circle cx="2928.7" cy="1162.2" r="2.1"/>
<circle cx="2935.8" cy="1169.3" r="2.1"/>
<circle cx="2944.7" cy="1169.3" r="2.1"/>
<circle cx="2951.8" cy="1185.8" r="2.1"/>
<circle cx="2960.7" cy="1185.8" r="2.1"/>
<circle cx="2967.8" cy="1185.8" r="2.1"/>
</g>
<g fill="#f6336a">
<circle cx="112.7" cy="1397.3" r="2.1"/>
<circle cx="119.8" cy="1397.3" r="2.1"/>
<circle cx="128.7" cy="1397.3" r="2.1"/>
<circle cx="135.8" cy="1397.3" r="2.1"/>
<circle cx="144.7" cy="1397.3" r="2.1"/>
<circle cx="151.8" cy="1397.3" r="2.1"/>
<circle cx="160.7" cy="1397.3" r="2.1"/>
<circle cx="167.8" cy="1397.3" r="2.1"/>
<circle cx="176.7" cy="1397.3" r="2.1"/>
<circle cx="183.8" cy="1397.3" r="2.1"/>
<circle cx="192.7" cy="1397.3" r="2.1"/>
<circle cx="199.8" cy="1397.3" r="2.1"/>
<circle cx="208.7" cy="1397.3" r="2.1"/>
<circle cx="215.8" cy="1397.3" r="2.1"/>
<circle cx="224.7" cy="1397.3" r="2.1"/>
<circle cx="231.8" cy="1397.3" r="2.1"/>
<circle cx="240.7" cy="1397.3" r="2.1"/>
<circle cx="247.8" cy="1397.3" r="2.1"/>
<circle cx="256.7" cy="1397.3" r="2.1"/>
<circle cx="263.8" cy="1397.3" r="2.1"/>
<circle cx="272.7" cy="1397.3" r="2.1"/>
<circle cx="279.8" cy="1397.3" r="2.1"/>
<circle cx="288.7" cy="1397.3" r="2.1"/>
<circle cx="295.8" cy="1397.3" r="2.1"/>
<circle cx="304.7" cy="1397.3" r="2.1"/>
<circle cx="311.8" cy="1397.3" r="2.1"/>
<circle cx="320.7" cy="1397.3" r="2.1"/>
<circle cx="327.8" cy="1397.3" r="2.1"/>
<circle cx="336.7" cy="1397.3" r="2.1"/>
<circle cx="343.8" cy="1397.3" r="2.1"/>
<circle cx="352.7" cy="1397.3" r="2.1"/>
<circle cx="359.8" cy="1397.3" r="2.1"/>
<circle cx="368.7" cy="1397.3" r="2.1"/>
<circle cx="375.8" cy="1397.3" r="2.1"/>
<circle cx="384.7" cy="1397.3" r="2.1"/>
<circle cx="391.8" cy="1397.3" r="2.1"/>
<circle cx="400.7" cy="1397.3" r="2.1"/>
<circle cx="407.8" cy="1397.3" r="2.1"/>
<circle cx="416.7" cy="1397.3" r="2.1"/>
<circle cx="423.8" cy="1397.3" r="2.1"/>
<circle cx="432.7" cy="1397.3" r="2.1"/>
<circle cx="439.8" cy="1397.3" r="2.1"/>
<circle cx="448.7" cy="1397.3" r="2.1"/>
<circle cx="455.8" cy="1397.3" r="2.1"/>
<circle cx="464.7" cy="1397.3" r="2.1"/>
<circle cx="471.8" cy="1397.3" r="2.1"/>
<circle cx="480.7" cy="1397.3" r="2.1"/>
<circle cx="487.8" cy="1397.3" r="2.1"/>
<circle cx="496.7" cy="1397.3" r="2.1"/>
<circle cx="503.8" cy="1397.3" r="2.1"/>
<circle cx="512.7" cy="1397.3" r="2.1"/>
<circle cx="519.8" cy="1397.3" r="2.1"/>
<circle cx="528.7" cy="1397.3" r="2.1"/>
<circle cx="535.8" cy="1397.3" r="2.1"/>
<circle cx="544.7" cy="1397.3" r="2.1"/>
<circle cx="551.8" cy="1397.3" r="2.1"/>
<circle cx="560.7" cy="1397.3" r="2.1"/>
<circle cx="567.8" cy="1397.3" r="2.1"/>
<circle cx="576.7" cy="1397.3" r="2.1"/>
<circle cx="583.8" cy="1397.3" r="2.1"/>
<circle cx="592.7" cy="1397.3" r="2.1"/>
<circle cx="599.8" cy="1397.3" r="2.1"/>
<circle cx="608.7" cy="1397.3" r="2.1"/>
<circle cx="615.8" cy="1397.3" r="2.1"/>
<circle cx="624.7" cy="1397.3" r="2.1"/>
<circle cx="631.8" cy="1397.3" r="2.1"/>
<circle cx="640.7" cy="1397.3" r="2.1"/>
<circle cx="647.8" cy="1397.3" r="2.1"/>
<circle cx="656.7" cy="1397.3" r="2.1"/>
<circle cx="663.8" cy="1397.3" r="2.1"/>
<circle cx="672.7" cy="1397.3" r="2.1"/>
<circle cx="679.8" cy="1397.3" r="2.1"/>
<circle cx="688.7" cy="1397.3" r="2.1"/>
<circle cx="695.8" cy="1397.3" r="2.1"/>
<circle cx="704.7" cy="1397.3" r="2.1"/>
<circle cx="711.8" cy="1397.3" r="2.1"/>
<circle cx="720.7" cy="1397.3" r="2.1"/>
<circle cx="727.8" cy="1397.3" r="2.1"/>
<circle cx="736.7" cy="1397.3" r="2.1"/>
<circle cx="743.8" cy="1397.3" r="2.1"/>
<circle cx="752.7" cy="1397.3" r="2.1"/>
<circle cx="759.8" cy="1397.3" r="2.1"/>
<circle cx="768.7" cy="1397.3" r="2.1"/>
<circle cx="775.8" cy="1397.3" r="2.1"/>
<circle cx="784.7" cy="1397.3" r="2.1"/>
<circle cx="791.8" cy="1397.3" r="2.1"/>
<circle cx="800.7" cy="1397.3" r="2.1"/>
<circle cx="807.8" cy="1397.3" r="2.1"/>
<circle cx="816.7" cy="1397.3" r="2.1"/>
<circle cx="823.8" cy="1390.2" r="2.1"/>
<circle cx="832.7" cy="1390.2" r="2.1"/>
<circle cx="839.8" cy="1390.2" r="2.1"/>
<circle cx="848.7" cy="1390.2" r="2.1"/>
<circle cx="855.8" cy="1390.2" r="2.1"/>
<circle cx="864.7" cy="1390.2" r="2.1"/>
<circle cx="871.8" cy="1390.2" r="2.1"/>
<circle cx="880.7" cy="1390.2" r="2.1"/>
<circle cx="887.8" cy="1390.2" r="2.1"/>
<circle cx="896.7" cy="1390.2" r="2.1"/>
<circle cx="903.8" cy="1390.2" r="2.1"/>
<circle cx="912.7" cy="1390.2" r="2.1"/>
<circle cx="919.8" cy="1390.2" r="2.1"/>
<circle cx="928.7" cy="1390.2" r="2.1"/>
<circle cx="935.8" cy="1390.2" r="2.1"/>
<circle cx="944.7" cy="1390.2" r="2.1"/>
<circle cx="951.8" cy="1390.2" r="2.1"/>
<circle cx="960.7" cy="1390.2" r="2.1"/>
<circle cx="967.8" cy="1390.2" r="2.1"/>
<circle cx="976.7" cy="1390.2" r="2.1"/>
<circle cx="983.8" cy="1390.2" r="2.1"/>
<circle cx="992.7" cy="1390.2" r="2.1"/>
<circle cx="999.8" cy="1390.2" r="2.1"/>
<circle cx="1008.7" cy="1390.2" r="2.1"/>
<circle cx="1015.8" cy="1390.2" r="2.1"/>
<circle cx="1024.7" cy="1390.2" r="2.1"/>
<circle cx="1031.8" cy="1390.2" r="2.1"/>
<circle cx="1040.7" cy="1390.2" r="2.1"/>
<circle cx="1047.8" cy="1390.2" r="2.1"/>
<circle cx="1056.7" cy="1390.2" r="2.1"/>
<circle cx="1063.8" cy="1390.2" r="2.1"/>
<circle cx="1072.7" cy="1390.2" r="2.1"/>
<circle cx="1079.8" cy="1390.2" r="2.1"/>
<circle cx="1088.7" cy="1390.2" r="2.1"/>
<circle cx="1095.8" cy="1390.2" r="2.1"/>
<circle cx="1104.7" cy="1390.2" r="2.1"/>
<circle cx="1111.8" cy="1390.2" r="2.1"/>
<circle cx="1120.7" cy="1390.2" r="2.1"/>
<circle cx="1127.8" cy="1390.2" r="2.1"/>
<circle cx="1136.7" cy="1390.2" r="2.1"/>
<circle cx="1143.8" cy="1390.2" r="2.1"/>
<circle cx="1152.7" cy="1390.2" r="2.1"/>
<circle cx="1159.8" cy="1390.2" r="2.1"/>
<circle cx="1168.7" cy="1390.2" r="2.1"/>
<circle cx="1175.8" cy="1390.2" r="2.1"/>
<circle cx="1184.7" cy="1390.2" r="2.1"/>
<circle cx="1191.8" cy="1390.2" r="2.1"/>
<circle cx="1200.7" cy="1390.2" r="2.1"/>
<circle cx="1207.8" cy="1390.2" r="2.1"/>
<circle cx="1216.7" cy="1390.2" r="2.1"/>
<circle cx="1223.8" cy="1383.0" r="2.1"/>
<circle cx="1232.7" cy="1383.0" r="2.1"/>
<circle cx="1239.8" cy="1383.0" r="2.1"/>
<circle cx="1248.7" cy="1383.0" r="2.1"/>
<circle cx="1255.8" cy="1383.0" r="2.1"/>
<circle cx="1264.7" cy="1383.0" r="2.1"/>
<circle cx="1271.8" cy="1383.0" r="2.1"/>
<circle cx="1280.7" cy="1383.0" r="2.1"/>
<circle cx="1287.8" cy="1383.0" r="2.1"/>
<circle cx="1296.7" cy="1383.0" r="2.1"/>
<circle cx="1303.8" cy="1383.0" r="2.1"/>
<circle cx="1312.7" cy="1383.0" r="2.1"/>
<circle cx="1319.8" cy="1383.0" r="2.1"/>
<circle cx="1328.7" cy="1383.0" r="2.1"/>
<circle cx="1335.8" cy="1383.0" r="2.1"/>
<circle cx="1344.7" cy="1383.0" r="2.1"/>
<circle cx="1351.8" cy="1383.0" r="2.1"/>
<circle cx="1360.7" cy="1383.0" r="2.1"/>
<circle cx="1367.8" cy="1383.0" r="2.1"/>
<circle cx="1376.7" cy="1383.0" r="2.1"/>
<circle cx="1383.8" cy="1383.0" r="2.1"/>
<circle cx="1392.7" cy="1383.0" r="2.1"/>
<circle cx="1399.8" cy="1383.0" r="2.1"/>
<circle cx="1408.7" cy="1383.0" r="2.1"/>
<circle cx="1415.8" cy="1383.0" r="2.1"/>
<circle cx="1424.7" cy="1383.0" r="2.1"/>
<circle cx="1431.8" cy="1383.0" r="2.1"/>
<circle cx="1440.7" cy="1383.0" r="2.1"/>
<circle cx="1447.8" cy="1383.0" r="2.1"/>
<circle cx="1456.7" cy="1383.0" r="2.1"/>
<circle cx="1463.8" cy="1383.0" r="2.1"/>
<circle cx="1472.7" cy="1390.2" r="2.1"/>
<circle cx="1479.8" cy="1390.2" r="2.1"/>
<circle cx="1488.7" cy="1390.2" r="2.1"/>
<circle cx="1495.8" cy="1390.2" r="2.1"/>
<circle cx="1504.7" cy="1390.2" r="2.1"/>
<circle cx="1511.8" cy="1390.2" r="2.1"/>
<circle cx="1520.7" cy="1390.2" r="2.1"/>
<circle cx="1527.8" cy="1390.2" r="2.1"/>
<circle cx="1536.7" cy="1390.2" r="2.1"/>
<circle cx="1543.8" cy="1390.2" r="2.1"/>
<circle cx="1552.7" cy="1390.2" r="2.1"/>
<circle cx="1559.8" cy="1390.2" r="2.1"/>
<circle cx="1568.7" cy="1390.2" r="2.1"/>
<circle cx="1575.8" cy="1390.2" r="2.1"/>
<circle cx="1584.7" cy="1390.2" r="2.1"/>
<circle cx="1591.8" cy="1390.2" r="2.1"/>
<circle cx="1600.7" cy="1390.2" r="2.1"/>
<circle cx="1607.8" cy="1390.2" r="2.1"/>
<circle cx="1616.7" cy="1390.2" r="2.1"/>
<circle cx="1623.8" cy="1390.2" r="2.1"/>
<circle cx="1632.7" cy="1390.2" r="2.1"/>
<circle cx="1639.8" cy="1390.2" r="2.1"/>
<circle cx="1648.7" cy="1390.2" r="2.1"/>
<circle cx="1655.8" cy="1390.2" r="2.1"/>
<circle cx="1664.7" cy="1390.2" r="2.1"/>
<circle cx="1671.8" cy="1390.2" r="2.1"/>
<circle cx="1680.7" cy="1390.2" r="2.1"/>
<circle cx="1687.8" cy="1390.2" r="2.1"/>
<circle cx="1696.7" cy="1383.0" r="2.1"/>
<circle cx="1703.8" cy="1390.2" r="2.1"/>
<circle cx="1712.7" cy="1390.2" r="2.1"/>
<circle cx="1719.8" cy="1390.2" r="2.1"/>
<circle cx="1728.7" cy="1390.2" r="2.1"/>
<circle cx="1735.8" cy="1390.2" r="2.1"/>
<circle cx="1744.7" cy="1390.2" r="2.1"/>
<circle cx="1751.8" cy="1390.2" r="2.1"/>
<circle cx="1760.7" cy="1390.2" r="2.1"/>
<circle cx="1767.8" cy="1390.2" r="2.1"/>
<circle cx="1776.7" cy="1390.2" r="2.1"/>
<circle cx="1783.8" cy="1390.2" r="2.1"/>
<circle cx="1792.7" cy="1390.2" r="2.1"/>
<circle cx="1799.8" cy="1390.2" r="2.1"/>
<circle cx="1808.7" cy="1390.2" r="2.1"/>
<circle cx="1815.8" cy="1390.2" r="2.1"/>
<circle cx="1824.7" cy="1390.2" r="2.1"/>
<circle cx="1831.8" cy="1390.2" r="2.1"/>
<circle cx="1840.7" cy="1390.2" r="2.1"/>
<circle cx="1847.8" cy="1390.2" r="2.1"/>
<circle cx="1856.7" cy="1383.0" r="2.1"/>
<circle cx="1863.8" cy="1390.2" r="2.1"/>
<circle cx="1872.7" cy="1390.2" r="2.1"/>
<circle cx="1879.8" cy="1390.2" r="2.1"/>
<circle cx="1888.7" cy="1390.2" r="2.1"/>
<circle cx="1895.8" cy="1390.2" r="2.1"/>
<circle cx="1904.7" cy="1390.2" r="2.1"/>
<circle cx="1911.8" cy="1390.2" r="2.1"/>
<circle cx="1920.7" cy="1390.2" r="2.1"/>
<circle cx="1927.8" cy="1390.2" r="2.1"/>
<circle cx="1936.7" cy="1390.2" r="2.1"/>
<circle cx="1943.8" cy="1390.2" r="2.1"/>
<circle cx="1952.7" cy="1390.2" r="2.1"/>
<circle cx="1959.8" cy="1390.2" r="2.1"/>
<circle cx="1968.7" cy="1390.2" r="2.1"/>
<circle cx="1975.8" cy="1390.2" r="2.1"/>
<circle cx="1984.7" cy="1390.2" r="2.1"/>
<circle cx="1991.8" cy="1390.2" r="2.1"/>
<circle cx="2000.7" cy="1390.2" r="2.1"/>
<circle cx="2007.8" cy="1390.2" r="2.1"/>
<circle cx="2016.7" cy="1390.2" r="2.1"/>
<circle cx="2023.8" cy="1390.2" r="2.1"/>
<circle cx="2032.7" cy="1390.2" r="2.1"/>
<circle cx="2039.8" cy="1390.2" r="2.1"/>
<circle cx="2048.7" cy="1390.2" r="2.1"/>
<circle cx="2055.8" cy="1390.2" r="2.1"/>
<circle cx="2064.7" cy="1390.2" r="2.1"/>
<circle cx="2071.8" cy="1390.2" r="2.1"/>
<circle cx="2080.7" cy="1390.2" r="2.1"/>
<circle cx="2087.8" cy="1390.2" r="2.1"/>
<circle cx="2096.7" cy="1383.0" r="2.1"/>
<circle cx="2103.8" cy="1383.0" r="2.1"/>
<circle cx="2112.7" cy="1383.0" r="2.1"/>
<circle cx="2119.8" cy="1383.0" r="2.1"/>
<circle cx="2128.7" cy="1383.0" r="2.1"/>
<circle cx="2135.8" cy="1383.0" r="2.1"/>
<circle cx="2144.7" cy="1383.0" r="2.1"/>
<circle cx="2151.8" cy="1383.0" r="2.1"/>
<circle cx="2160.7" cy="1383.0" r="2.1"/>
<circle cx="2167.8" cy="1383.0" r="2.1"/>
<circle cx="2176.7" cy="1383.0" r="2.1"/>
<circle cx="2183.8" cy="1383.0" r="2.1"/>
<circle cx="2192.7" cy="1383.0" r="2.1"/>
<circle cx="2199.8" cy="1383.0" r="2.1"/>
<circle cx="2208.7" cy="1383.0" r="2.1"/>
<circle cx="2215.8" cy="1383.0" r="2.1"/>
<circle cx="2224.7" cy="1383.0" r="2.1"/>
<circle cx="2231.8" cy="1383.0" r="2.1"/>
<circle cx="2240.7" cy="1383.0" r="2.1"/>
<circle cx="2247.8" cy="1383.0" r="2.1"/>
<circle cx="2256.7" cy="1383.0" r="2.1"/>
<circle cx="2263.8" cy="1383.0" r="2.1"/>
<circle cx="2272.7" cy="1383.0" r="2.1"/>
<circle cx="2279.8" cy="1383.0" r="2.1"/>
<circle cx="2288.7" cy="1383.0" r="2.1"/>
<circle cx="2295.8" cy="1383.0" r="2.1"/>
<circle cx="2304.7" cy="1383.0" r="2.1"/>
<circle cx="2311.8" cy="1383.0" r="2.1"/>
<circle cx="2320.7" cy="1383.0" r="2.1"/>
<circle cx="2327.8" cy="1383.0" r="2.1"/>
<circle cx="2336.7" cy="1383.0" r="2.1"/>
<circle cx="2343.8" cy="1390.2" r="2.1"/>
<circle cx="2352.7" cy="1390.2" r="2.1"/>
<circle cx="2359.8" cy="1390.2" r="2.1"/>
<circle cx="2368.7" cy="1390.2" r="2.1"/>
<circle cx="2375.8" cy="1390.2" r="2.1"/>
<circle cx="2384.7" cy="1390.2" r="2.1"/>
<circle cx="2391.8" cy="1390.2" r="2.1"/>
<circle cx="2400.7" cy="1390.2" r="2.1"/>
<circle cx="2407.8" cy="1390.2" r="2.1"/>
<circle cx="2416.7" cy="1390.2" r="2.1"/>
<circle cx="2423.8" cy="1390.2" r="2.1"/>
<circle cx="2432.7" cy="1390.2" r="2.1"/>
<circle cx="2439.8" cy="1390.2" r="2.1"/>
<circle cx="2448.7" cy="1390.2" r="2.1"/>
<circle cx="2455.8" cy="1390.2" r="2.1"/>
<circle cx="2464.7" cy="1390.2" r="2.1"/>
<circle cx="2471.8" cy="1390.2" r="2.1"/>
<circle cx="2480.7" cy="1390.2" r="2.1"/>
<circle cx="2487.8" cy="1390.2" r="2.1"/>
<circle cx="2496.7" cy="1383.0" r="2.1"/>
<circle cx="2503.8" cy="1390.2" r="2.1"/>
<circle cx="2512.7" cy="1390.2" r="2.1"/>
<circle cx="2519.8" cy="1390.2" r="2.1"/>
<circle cx="2528.7" cy="1390.2" r="2.1"/>
<circle cx="2535.8" cy="1390.2" r="2.1"/>
<circle cx="2544.7" cy="1390.2" r="2.1"/>
<circle cx="2551.8" cy="1390.2" r="2.1"/>
<circle cx="2560.7" cy="1390.2" r="2.1"/>
<circle cx="2567.8" cy="1390.2" r="2.1"/>
<circle cx="2576.7" cy="1390.2" r="2.1"/>
<circle cx="2583.8" cy="1390.2" r="2.1"/>
<circle cx="2592.7" cy="1390.2" r="2.1"/>
<circle cx="2599.8" cy="1390.2" r="2.1"/>
<circle cx="2608.7" cy="1390.2" r="2.1"/>
<circle cx="2615.8" cy="1390.2" r="2.1"/>
<circle cx="2624.7" cy="1390.2" r="2.1"/>
<circle cx="2631.8" cy="1390.2" r="2.1"/>
<circle cx="2640.7" cy="1390.2" r="2.1"/>
<circle cx="2647.8" cy="1390.2" r="2.1"/>
<circle cx="2656.7" cy="1390.2" r="2.1"/>
<circle cx="2663.8" cy="1390.2" r="2.1"/>
<circle cx="2672.7" cy="1390.2" r="2.1"/>
<circle cx="2679.8" cy="1390.2" r="2.1"/>
<circle cx="2688.7" cy="1390.2" r="2.1"/>
<circle cx="2695.8" cy="1390.2" r="2.1"/>
<circle cx="2704.7" cy="1390.2" r="2.1"/>
<circle cx="2711.8" cy="1390.2" r="2.1"/>
<circle cx="2720.7" cy="1390.2" r="2.1"/>
<circle cx="2727.8" cy="1390.2" r="2.1"/>
<circle cx="2736.7" cy="1390.2" r="2.1"/>
<circle cx="2743.8" cy="1390.2" r="2.1"/>
<circle cx="2752.7" cy="1390.2" r="2.1"/>
<circle cx="2759.8" cy="1390.2" r="2.1"/>
<circle cx="2768.7" cy="1390.2" r="2.1"/>
<circle cx="2775.8" cy="1390.2" r="2.1"/>
<circle cx="2784.7" cy="1390.2" r="2.1"/>
<circle cx="2791.8" cy="1390.2" r="2.1"/>
<circle cx="2800.7" cy="1390.2" r="2.1"/>
<circle cx="2807.8" cy="1383.0" r="2.1"/>
<circle cx="2816.7" cy="1383.0" r="2.1"/>
<circle cx="2823.8" cy="1383.0" r="2.1"/>
<circle cx="2832.7" cy="1383.0" r="2.1"/>
<circle cx="2839.8" cy="1383.0" r="2.1"/>
<circle cx="2848.7" cy="1383.0" r="2.1"/>
<circle cx="2855.8" cy="1383.0" r="2.1"/>
<circle cx="2864.7" cy="1383.0" r="2.1"/>
<circle cx="2871.8" cy="1383.0" r="2.1"/>
<circle cx="2880.7" cy="1383.0" r="2.1"/>
<circle cx="2887.8" cy="1383.0" r="2.1"/>
<circle cx="2896.7" cy="1383.0" r="2.1"/>
<circle cx="2903.8" cy="1383.0" r="2.1"/>
<circle cx="2912.7" cy="1383.0" r="2.1"/>
<circle cx="2919.8" cy="1383.0" r="2.1"/>
<circle cx="2928.7" cy="1383.0" r="2.1"/>
<circle cx="2935.8" cy="1383.0" r="2.1"/>
<circle cx="2944.7" cy="1383.0" r="2.1"/>
<circle cx="2951.8" cy="1383.0" r="2.1"/>
<circle cx="2960.7" cy="1383.0" r="2.1"/>
<circle cx="2967.8" cy="1383.0" r="2.1"/>
</g>
<g fill="#0fb4f5">
<circle cx="128.7" cy="919.8" r="2.1"/>
<circle cx="128.7" cy="934.2" r="2.1"/>
<circle cx="135.8" cy="927.0" r="2.1"/>
<circle cx="135.8" cy="941.3" r="2.1"/>
<circle cx="144.7" cy="919.8" r="2.1"/>
<circle cx="144.7" cy="934.2" r="2.1"/>
<circle cx="151.8" cy="927.0" r="2.1"/>
<circle cx="151.8" cy="941.3" r="2.1"/>
</g>
<g fill="#10e8a0">
<circle cx="128.7" cy="957.8" r="2.1"/>
<circle cx="128.7" cy="972.2" r="2.1"/>
<circle cx="135.8" cy="965.0" r="2.1"/>
<circle cx="135.8" cy="979.3" r="2.1"/>
<circle cx="144.7" cy="957.8" r="2.1"/>
<circle cx="144.7" cy="972.2" r="2.1"/>
<circle cx="151.8" cy="965.0" r="2.1"/>
<circle cx="151.8" cy="979.3" r="2.1"/>
</g>
<g fill="#fcd462">
<circle cx="128.7" cy="995.8" r="2.1"/>
<circle cx="128.7" cy="1010.2" r="2.1"/>
<circle cx="135.8" cy="1003.0" r="2.1"/>
<circle cx="135.8" cy="1017.3" r="2.1"/>
<circle cx="144.7" cy="995.8" r="2.1"/>
<circle cx="144.7" cy="1010.2" r="2.1"/>
<circle cx="151.8" cy="1003.0" r="2.1"/>
<circle cx="151.8" cy="1017.3" r="2.1"/>
</g>
<g fill="#f6336a">
<circle cx="128.7" cy="1033.8" r="2.1"/>
<circle cx="128.7" cy="1048.2" r="2.1"/>
<circle cx="135.8" cy="1041.0" r="2.1"/>
<circle cx="135.8" cy="1055.3" r="2.1"/>
<circle cx="144.7" cy="1033.8" r="2.1"/>
<circle cx="144.7" cy="1048.2" r="2.1"/>
<circle cx="151.8" cy="1041.0" r="2.1"/>
<circle cx="151.8" cy="1055.3" r="2.1"/>
</g>
</svg>
<svg width="48" height="38" viewBox="0 0 48 38" style="position:absolute;left:136px;top:0px">
<defs><linearGradient id="dg" x1="0" y1="0" x2="1" y2="1"><stop offset="0" stop-color="#66e4f6"/><stop offset="0.6" stop-color="#3ccbee"/><stop offset="1" stop-color="#1a9edc"/></linearGradient></defs>
<path d="M5.8,12.5 C5.8,10.8 6.8,9.8 8.8,9.4 C8.4,6.5 9.4,3 12.5,-1 L33.5,-1 C36,4 37.8,10 37.5,14 C37.2,17 36.5,19 35.5,21 C34,23.5 31,25.3 27,25.8 L24,26 C23,24.8 22,24 21,23.5 C25,23.5 28,21 29.2,18.5 C30,16 28.5,14 24.5,13 C20,12.3 15,13.5 12,13.8 C9,14 7,13.8 6,12.5 Z" fill="#c0c5cd"/>
<path d="M5.8,12.3 C5.8,10.8 6.8,9.8 8.8,9.4 C8.4,6.5 9.4,3 12.5,-1 L33.5,-1 C36,4 37.8,10 37.5,14 C37.2,17 36.5,19 35.5,21 C33.5,17 32,14 27,12 C22,10.3 15,10 6,12.3 Z" fill="url(#dg)"/>
<path d="M16,13 L21.5,13.2 C22.5,15 23.5,16.5 24.3,18 C20.5,17.5 18,15.5 16,13 Z" fill="#6e96a0"/>
<path d="M17.2,21 C19,22 21,23 24,26 C22,28.5 19.5,30.5 16.5,32.2 C17.3,28.5 17.6,24.5 17.2,21 Z" fill="#6e96a0"/>
<circle cx="14.3" cy="6.8" r="1.3" fill="#0c1a22"/>
</svg>
</body></html>
